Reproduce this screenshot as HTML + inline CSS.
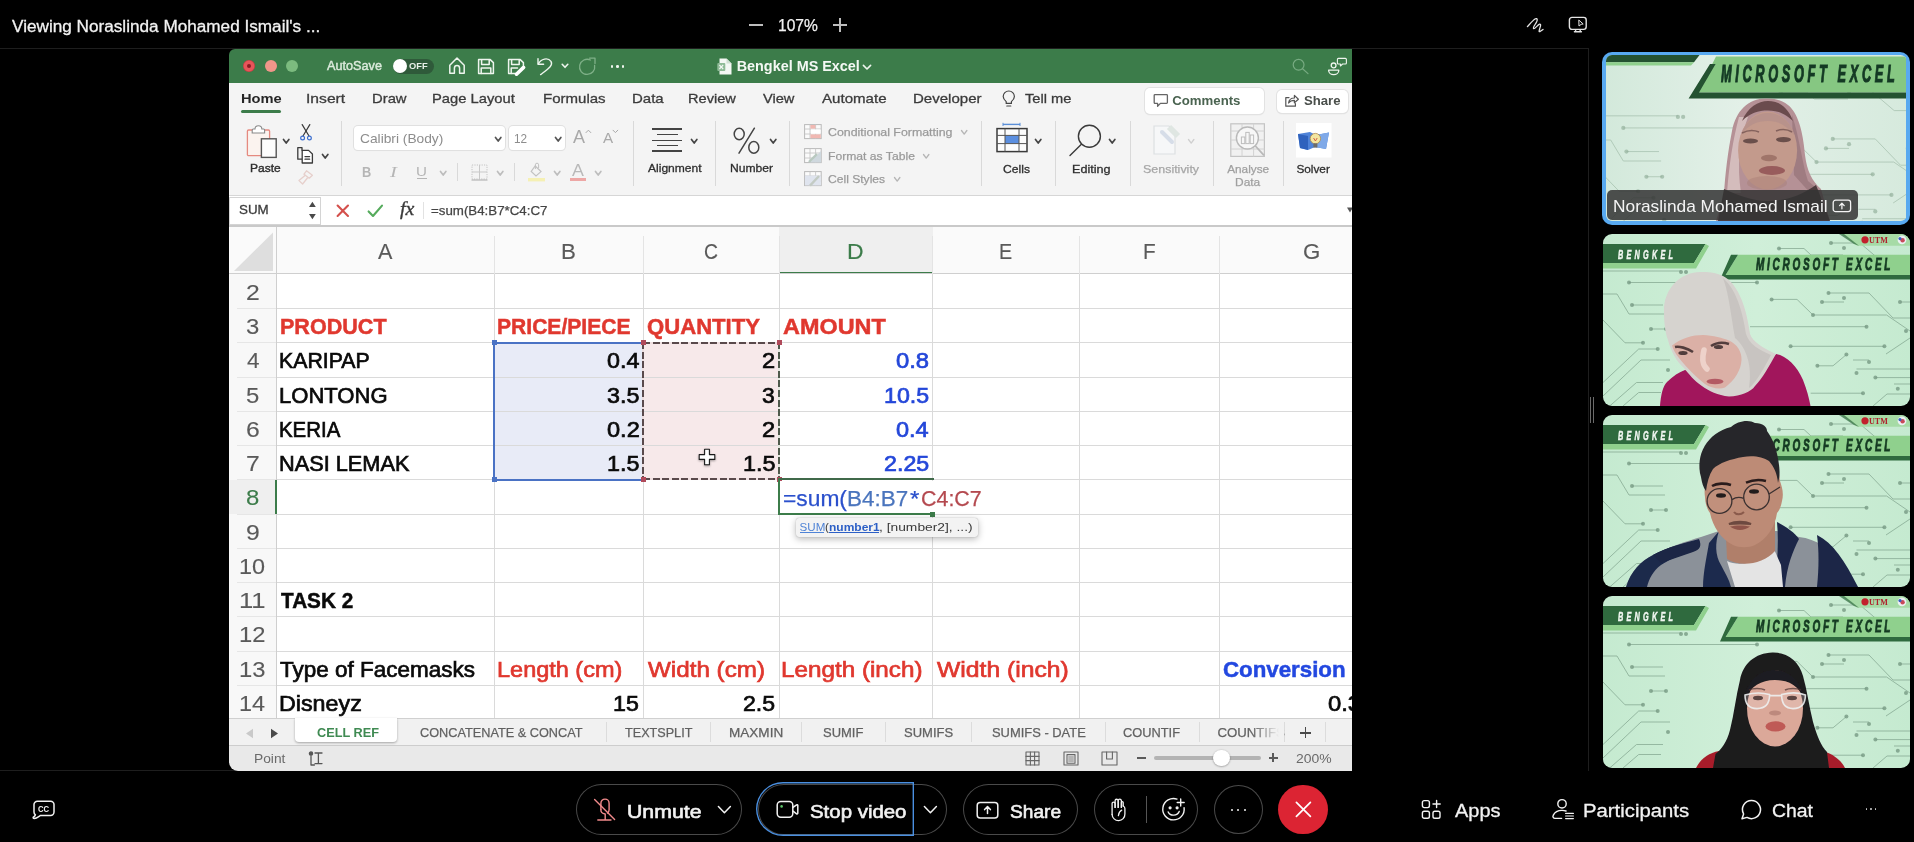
<!DOCTYPE html>
<html><head><meta charset="utf-8"><title>Meeting</title>
<style>
html,body{margin:0;padding:0;background:#000;}
body{width:1914px;height:842px;position:relative;overflow:hidden;font-family:'Liberation Sans', sans-serif;opacity:.999;}
body>div,body>svg,body>span{position:absolute;}
.t{white-space:pre;line-height:1;transform-origin:0 50%;display:block;}
svg{overflow:visible}
</style></head>
<body>
<div style="left:0px;top:48px;width:1588px;height:1px;background:#1e1e1e;"></div>
<div style="left:1588px;top:48px;width:1px;height:723px;background:#1e1e1e;"></div>
<div style="left:0px;top:770px;width:1588px;height:1px;background:#1e1e1e;"></div>
<div style="left:1590px;top:397px;width:1px;height:26px;background:#6a6a6a;"></div>
<div style="left:1593px;top:397px;width:1px;height:26px;background:#6a6a6a;"></div>
<div style="left:749px;top:24px;width:14px;height:2px;background:#bdbdbd;"></div>
<div style="left:833px;top:24px;width:14px;height:2px;background:#bdbdbd;"></div>
<div style="left:839px;top:18px;width:2px;height:14px;background:#bdbdbd;"></div>
<div style="left:229px;top:49px;width:1123px;height:40px;background:#3c7c4a;border-radius:6px 0 0 0;"></div>
<div style="left:229px;top:83px;width:1123px;height:113px;background:#f4f4f4;"></div>
<div style="left:229px;top:195px;width:1123px;height:1px;background:#d6d6d6;"></div>
<div style="left:229px;top:196px;width:1123px;height:29px;background:#ffffff;"></div>
<div style="left:229px;top:225px;width:1123px;height:2px;background:#c9c9c9;"></div>
<div style="left:229px;top:227px;width:1123px;height:491px;background:#ffffff;"></div>
<div style="left:229px;top:227px;width:1123px;height:47px;background:#fafafa;"></div>
<div style="left:229px;top:274px;width:47px;height:443.5px;background:#f8f8f8;"></div>
<div style="left:779px;top:227px;width:153.7px;height:45px;background:#efefef;"></div>
<div style="left:779px;top:272px;width:154px;height:2.2px;background:#3c7c4a;"></div>
<div style="left:229px;top:480px;width:47px;height:34px;background:#efefef;"></div>
<svg style="left:232px;top:231px;" width="42" height="41" viewBox="0 0 42 41"><polygon points="41,1.4 41,40 2,40" fill="#dedede"/></svg>
<div style="left:494.3px;top:342.5px;width:148.7px;height:137px;background:#e8ebf7;"></div>
<div style="left:643px;top:342.5px;width:136px;height:137px;background:#f7e9ea;"></div>
<div style="left:229px;top:273px;width:1123px;height:1.3px;background:#cfcfcf;"></div>
<div style="left:276px;top:307.5px;width:1076px;height:1px;background:#dadada;"></div>
<div style="left:237px;top:307.5px;width:39px;height:1px;background:#e6e6e6;"></div>
<div style="left:276px;top:342.0px;width:1076px;height:1px;background:#dadada;"></div>
<div style="left:237px;top:342.0px;width:39px;height:1px;background:#e6e6e6;"></div>
<div style="left:276px;top:376.5px;width:1076px;height:1px;background:#dadada;"></div>
<div style="left:237px;top:376.5px;width:39px;height:1px;background:#e6e6e6;"></div>
<div style="left:276px;top:410.5px;width:1076px;height:1px;background:#dadada;"></div>
<div style="left:237px;top:410.5px;width:39px;height:1px;background:#e6e6e6;"></div>
<div style="left:276px;top:444.5px;width:1076px;height:1px;background:#dadada;"></div>
<div style="left:237px;top:444.5px;width:39px;height:1px;background:#e6e6e6;"></div>
<div style="left:276px;top:479.0px;width:1076px;height:1px;background:#dadada;"></div>
<div style="left:237px;top:479.0px;width:39px;height:1px;background:#e6e6e6;"></div>
<div style="left:276px;top:513.5px;width:1076px;height:1px;background:#dadada;"></div>
<div style="left:237px;top:513.5px;width:39px;height:1px;background:#e6e6e6;"></div>
<div style="left:276px;top:547.5px;width:1076px;height:1px;background:#dadada;"></div>
<div style="left:237px;top:547.5px;width:39px;height:1px;background:#e6e6e6;"></div>
<div style="left:276px;top:581.5px;width:1076px;height:1px;background:#dadada;"></div>
<div style="left:237px;top:581.5px;width:39px;height:1px;background:#e6e6e6;"></div>
<div style="left:276px;top:616.0px;width:1076px;height:1px;background:#dadada;"></div>
<div style="left:237px;top:616.0px;width:39px;height:1px;background:#e6e6e6;"></div>
<div style="left:276px;top:650.5px;width:1076px;height:1px;background:#dadada;"></div>
<div style="left:237px;top:650.5px;width:39px;height:1px;background:#e6e6e6;"></div>
<div style="left:276px;top:684.5px;width:1076px;height:1px;background:#dadada;"></div>
<div style="left:237px;top:684.5px;width:39px;height:1px;background:#e6e6e6;"></div>
<div style="left:275.5px;top:227px;width:1.2px;height:490.5px;background:#cfcfcf;"></div>
<div style="left:493.8px;top:236px;width:1px;height:38px;background:#e4e4e4;"></div>
<div style="left:493.8px;top:274px;width:1px;height:443.5px;background:#dadada;"></div>
<div style="left:642.5px;top:236px;width:1px;height:38px;background:#e4e4e4;"></div>
<div style="left:642.5px;top:274px;width:1px;height:443.5px;background:#dadada;"></div>
<div style="left:778.5px;top:236px;width:1px;height:38px;background:#e4e4e4;"></div>
<div style="left:778.5px;top:274px;width:1px;height:443.5px;background:#dadada;"></div>
<div style="left:932.2px;top:236px;width:1px;height:38px;background:#e4e4e4;"></div>
<div style="left:932.2px;top:274px;width:1px;height:443.5px;background:#dadada;"></div>
<div style="left:1079.0px;top:236px;width:1px;height:38px;background:#e4e4e4;"></div>
<div style="left:1079.0px;top:274px;width:1px;height:443.5px;background:#dadada;"></div>
<div style="left:1219.0px;top:236px;width:1px;height:38px;background:#e4e4e4;"></div>
<div style="left:1219.0px;top:274px;width:1px;height:443.5px;background:#dadada;"></div>
<div style="left:274.6px;top:479.5px;width:2.4px;height:34.5px;background:#3c7c4a;"></div>
<div style="left:493.3px;top:341.7px;width:150px;height:2px;background:#4a72c4;"></div>
<div style="left:493.3px;top:478.5px;width:150px;height:2px;background:#4a72c4;"></div>
<div style="left:493.3px;top:341.7px;width:2px;height:139px;background:#4a72c4;"></div>
<div style="left:491.8px;top:340.3px;width:5px;height:5px;background:#4a72c4;"></div>
<div style="left:491.8px;top:477.2px;width:5px;height:5px;background:#4a72c4;"></div>
<div style="left:643px;top:341.7px;width:137px;height:2.2px;background:repeating-linear-gradient(90deg,#5a4a4c 0 7px,#eedfe0 7px 9.6px);"></div>
<div style="left:643px;top:478.3px;width:137px;height:2.2px;background:repeating-linear-gradient(90deg,#5a4a4c 0 7px,#eedfe0 7px 9.6px);"></div>
<div style="left:642px;top:342px;width:2.2px;height:138px;background:repeating-linear-gradient(180deg,#5a4a4c 0 7px,#eedfe0 7px 9.6px);"></div>
<div style="left:778px;top:342px;width:2.2px;height:138px;background:repeating-linear-gradient(180deg,#4f5a4c 0 7px,#e4e8e0 7px 9.6px);"></div>
<div style="left:640.8px;top:340.3px;width:5px;height:5px;background:#b04a5a;"></div>
<div style="left:777.3px;top:340.3px;width:5px;height:5px;background:#b04a5a;"></div>
<div style="left:640.8px;top:477.2px;width:5px;height:5px;background:#b04a5a;"></div>
<div style="left:777.3px;top:477.2px;width:5px;height:5px;background:#b04a5a;"></div>
<div style="left:780px;top:480.5px;width:204px;height:32.5px;background:#ffffff;"></div>
<div style="left:778px;top:478.3px;width:156px;height:2px;background:#40694a;"></div>
<div style="left:778px;top:478.3px;width:2px;height:36.5px;background:#3c7c4a;"></div>
<div style="left:778px;top:513px;width:152px;height:2px;background:#3c7c4a;"></div>
<div style="left:930px;top:512px;width:5px;height:5px;background:#3c7c4a;"></div>
<div style="left:795.5px;top:517.5px;width:182.5px;height:19px;background:#f3f3f3;border-radius:3px;box-shadow:0 2px 7px rgba(0,0,0,.28),0 0 1px rgba(0,0,0,.35);"></div>
<div style="left:799.9px;top:532px;width:24.6px;height:1px;background:#4f83d6;"></div>
<div style="left:829.3px;top:532px;width:49.7px;height:1.3px;background:#2c5fc6;"></div>
<div style="left:243.0px;top:59.8px;width:12.4px;height:12.4px;border-radius:50%;background:#e8555a;box-shadow:inset 0 0 0 .6px rgba(120,20,20,.35);"></div>
<div style="left:247.2px;top:64px;width:4px;height:4px;border-radius:50%;background:#8a1a22;"></div>
<div style="left:264.6px;top:59.8px;width:12.4px;height:12.4px;border-radius:50%;background:#f0968a;"></div>
<div style="left:286.1px;top:59.8px;width:12.4px;height:12.4px;border-radius:50%;background:#7cbb7f;"></div>
<div style="left:392.5px;top:58.5px;width:41px;height:15px;background:#2f5a3a;border-radius:8px;"></div>
<div style="left:393.2px;top:59px;width:14px;height:14px;border-radius:50%;background:#ffffff;"></div>
<svg style="left:448px;top:56px;" width="18" height="19" viewBox="0 0 18 19" fill="none" stroke="#eef5ee" stroke-width="1.5" stroke-linecap="round" stroke-linejoin="round"><path d="M1.8 9.2 L9 2 L16.2 9.2 V17.2 H11.6 V12.2 a2.6 2.6 0 0 0 -5.2 0 V17.2 H1.8 Z"/></svg>
<svg style="left:477px;top:58px;" width="18" height="17" viewBox="0 0 18 17" fill="none" stroke="#eef5ee" stroke-width="1.5" stroke-linecap="round" stroke-linejoin="round"><path d="M1.6 1.6 H13.2 L16.4 4.6 V15.6 H1.6 Z"/><path d="M4.6 1.8 V6.4 H12.2 V1.8"/><path d="M4.2 15.4 V10 H13.8 V15.4"/></svg>
<svg style="left:506.5px;top:58px;" width="19" height="18" viewBox="0 0 19 18" fill="none" stroke="#eef5ee" stroke-width="1.5" stroke-linecap="round" stroke-linejoin="round"><path d="M9 15.6 H1.6 V1.6 H13.2 L16.4 4.6 V7.5"/><path d="M4.6 1.8 V6.4 H12.2 V1.8"/><path d="M4.2 15.4 V10 H10.5"/><path d="M9.5 16.2 L16.6 9.4" stroke-width="3.6" stroke="#ffffff"/></svg>
<svg style="left:536px;top:56px;" width="18" height="20" viewBox="0 0 18 20" fill="none" stroke="#eef5ee" stroke-width="1.4" stroke-linecap="round" stroke-linejoin="round"><path d="M2 2.6 V8.2 H7.6"/><path d="M2.4 7.8 C5 2.6 12 1.2 15 5.4 C17.4 9.4 12.4 12.6 4.6 18.6"/></svg>
<svg style="left:561px;top:63.4px;" width="8" height="6" viewBox="0 0 8 6" fill="none" stroke="#eef5ee" stroke-width="1.6" stroke-linecap="round" stroke-linejoin="round"><path d="M1.2 1.3 L4 4.3 L6.8 1.3"/></svg>
<svg style="left:578px;top:57px;" width="20" height="19" viewBox="0 0 20 19" fill="none" stroke="#7fb088" stroke-width="1.3" stroke-linecap="round" stroke-linejoin="round"><path d="M16.6 8.4 A7.6 7.6 0 1 1 12.4 3"/><path d="M11.6 1.2 H17 V6.6"/></svg>
<div style="left:610.7px;top:65.10000000000001px;width:2.6px;height:2.6px;border-radius:50%;background:#eef5ee;"></div>
<div style="left:616.1px;top:65.10000000000001px;width:2.6px;height:2.6px;border-radius:50%;background:#eef5ee;"></div>
<div style="left:621.5px;top:65.10000000000001px;width:2.6px;height:2.6px;border-radius:50%;background:#eef5ee;"></div>
<svg style="left:716.5px;top:57.5px;" width="15" height="17" viewBox="0 0 15 17"><path d="M2.5 0.5 H9.5 L14.5 5.5 V16.5 H2.5 Z" fill="#f4f8f4"/><path d="M9.5 0.5 V5.5 H14.5" fill="#cfe0d2"/><rect x="0.3" y="5" width="8" height="8" rx="1" fill="#8fbb97"/><path d="M2.4 7 L6.2 11 M6.2 7 L2.4 11" stroke="#f4f8f4" stroke-width="1.1"/></svg>
<svg style="left:861.5px;top:63.5px;" width="10" height="7" viewBox="0 0 10 7" fill="none" stroke="#eef5ee" stroke-width="1.6" stroke-linecap="round" stroke-linejoin="round"><path d="M1.4 1.4 L5 5 L8.6 1.4"/></svg>
<svg style="left:1292px;top:58px;" width="18" height="17" viewBox="0 0 18 17" fill="none" stroke="#78ab82" stroke-width="1.2" stroke-linecap="round" stroke-linejoin="round"><circle cx="6.6" cy="6.8" r="5.4"/><path d="M10.6 10.8 L16 15.6"/></svg>
<svg style="left:1326.5px;top:56.5px;" width="21" height="20" viewBox="0 0 21 20" fill="none" stroke="#eef5ee" stroke-width="1.3" stroke-linecap="round" stroke-linejoin="round"><circle cx="6.6" cy="8.4" r="2.4"/><path d="M1.6 13.2 H11.8 C11.8 19.2 1.6 19.2 1.6 13.2 Z"/><path d="M11.4 1.4 H18.4 a1 1 0 0 1 1 1 V6 a1 1 0 0 1 -1 1 H15.6 L13.4 9 V7 H11.4 a1 1 0 0 1 -1 -1 V2.4 a1 1 0 0 1 1 -1 Z" stroke-width="1.1"/></svg>
<div style="left:241px;top:110px;width:40px;height:3px;background:#3c7c4a;border-radius:1.5px;"></div>
<svg style="left:1000.5px;top:90px;" width="16" height="19" viewBox="0 0 16 19" fill="none" stroke="#444" stroke-width="1.2" stroke-linecap="round" stroke-linejoin="round"><path d="M5.2 11.6 C3 9.8 2.2 8.2 2.2 6.6 a5.6 5.6 0 0 1 11.2 0 C13.4 8.2 12.6 9.8 10.4 11.6 V13.4 H5.2 Z"/><path d="M5.8 16 H9.8"/></svg>
<div style="left:1145px;top:87.5px;width:119px;height:26px;background:#ffffff;border-radius:5px;box-shadow:0 0 0 1px #e2e2e2,0 1px 1.5px rgba(0,0,0,.10);"></div>
<div style="left:1277px;top:89.5px;width:70.5px;height:23px;background:#ffffff;border-radius:5px;box-shadow:0 0 0 1px #e2e2e2,0 1px 1.5px rgba(0,0,0,.10);"></div>
<svg style="left:1152.5px;top:93px;" width="16" height="15" viewBox="0 0 16 15" fill="none" stroke="#666" stroke-width="1.3" stroke-linecap="round" stroke-linejoin="round"><path d="M2 1.6 H13.6 a0.8 0.8 0 0 1 .8 .8 V9.6 a0.8 .8 0 0 1 -.8 .8 H7.4 L4.6 13.2 V10.4 H2 a.8 .8 0 0 1 -.8 -.8 V2.4 a.8 .8 0 0 1 .8 -.8 Z"/></svg>
<svg style="left:1284px;top:93px;" width="16" height="15" viewBox="0 0 16 15" fill="none" stroke="#555" stroke-width="1.2" stroke-linecap="round" stroke-linejoin="round"><path d="M5 4.6 H1.8 V13.2 H11.4 V10.6"/><path d="M4.6 10 C5 6.6 7.4 5 10.4 5 V2.4 L14.4 6.2 L10.4 9.8 V7.4 C8 7.4 6 8 4.6 10 Z"/></svg>
<div style="left:341.4px;top:120.5px;width:1px;height:65.5px;background:#d9d9d9;"></div>
<div style="left:633.0px;top:120.5px;width:1px;height:65.5px;background:#d9d9d9;"></div>
<div style="left:714.8px;top:120.5px;width:1px;height:65.5px;background:#d9d9d9;"></div>
<div style="left:789.2px;top:120.5px;width:1px;height:65.5px;background:#d9d9d9;"></div>
<div style="left:980.5px;top:120.5px;width:1px;height:65.5px;background:#d9d9d9;"></div>
<div style="left:1054.9px;top:120.5px;width:1px;height:65.5px;background:#d9d9d9;"></div>
<div style="left:1129.5px;top:120.5px;width:1px;height:65.5px;background:#d9d9d9;"></div>
<div style="left:1212.7px;top:120.5px;width:1px;height:65.5px;background:#d9d9d9;"></div>
<div style="left:1282.7px;top:120.5px;width:1px;height:65.5px;background:#d9d9d9;"></div>
<div style="left:456.7px;top:163px;width:1px;height:18px;background:#d9d9d9;"></div>
<div style="left:513.8px;top:163px;width:1px;height:18px;background:#d9d9d9;"></div>
<svg style="left:246px;top:124.5px;" width="32" height="34" viewBox="0 0 32 34"><rect x="1.4" y="5" width="22.2" height="25.6" rx="1.2" fill="#fbf3ef" stroke="#e58a80" stroke-width="1.3"/><path d="M6.2 8 V5 a1 1 0 0 1 1 -1 H9 a3.4 3.2 0 0 1 6.8 0 H17.6 a1 1 0 0 1 1 1 V8 Z" fill="#fff" stroke="#8a8a8a" stroke-width="1.1"/><rect x="15.4" y="13.8" width="14.8" height="18.6" fill="#fdfdfd" stroke="#555" stroke-width="1.4"/></svg>
<svg style="left:282.1px;top:137.9px;" width="8.4" height="6.6" viewBox="0 0 8.4 6.6" fill="none" stroke="#444" stroke-width="1.7" stroke-linecap="round" stroke-linejoin="round"><path d="M1.5 1.5 L4.2 5.1 L6.9 1.5"/></svg>
<svg style="left:298.5px;top:122.5px;" width="14" height="19" viewBox="0 0 14 19" fill="none" stroke="#3a3a3a" stroke-width="1.2" stroke-linecap="round" stroke-linejoin="round"><path d="M3.2 1.6 L10 13"/><path d="M10.8 1.6 L4 13"/><circle cx="3.6" cy="15" r="1.9" stroke="#3d6fd0"/><circle cx="10.4" cy="15" r="1.9" stroke="#3d6fd0"/></svg>
<svg style="left:296px;top:146.2px;" width="20" height="19" viewBox="0 0 20 19" fill="none" stroke="#3a3a3a" stroke-width="1.3" stroke-linecap="round" stroke-linejoin="round"><path d="M6 4.2 V1.6 H1.8 V13.2 H6" /><path d="M6.2 4.4 H12.6 L16.4 8 V17 H6.2 Z" fill="#fff"/><path d="M9 10.6 H13.6 M9 13.2 H13.6"/></svg>
<svg style="left:320.7px;top:152.70000000000002px;" width="8.4" height="6.6" viewBox="0 0 8.4 6.6" fill="none" stroke="#444" stroke-width="1.7" stroke-linecap="round" stroke-linejoin="round"><path d="M1.5 1.5 L4.2 5.1 L6.9 1.5"/></svg>
<svg style="left:297px;top:169px;" width="18" height="17" viewBox="0 0 18 17" fill="none" stroke="#e6cfcb" stroke-width="1.3" stroke-linecap="round" stroke-linejoin="round"><path d="M9.5 1.8 L15.4 6.2 L12.2 9.2 L7 5.2 Z"/><path d="M8 6.4 L2 11.6 L5.6 15 L10.4 9"/></svg>
<div style="left:354px;top:126px;width:151px;height:24px;background:#ffffff;border-radius:4px;box-shadow:0 0 0 1px #e0e0e0, 0 1px 1px rgba(0,0,0,.07);"></div>
<div style="left:508.8px;top:126px;width:56.7px;height:24px;background:#ffffff;border-radius:4px;box-shadow:0 0 0 1px #e0e0e0, 0 1px 1px rgba(0,0,0,.07);"></div>
<svg style="left:493.7px;top:135.9px;" width="8.4" height="6.6" viewBox="0 0 8.4 6.6" fill="none" stroke="#555" stroke-width="1.7" stroke-linecap="round" stroke-linejoin="round"><path d="M1.5 1.5 L4.2 5.1 L6.9 1.5"/></svg>
<svg style="left:553.9px;top:135.9px;" width="8.4" height="6.6" viewBox="0 0 8.4 6.6" fill="none" stroke="#555" stroke-width="1.7" stroke-linecap="round" stroke-linejoin="round"><path d="M1.5 1.5 L4.2 5.1 L6.9 1.5"/></svg>
<svg style="left:584.5px;top:128.5px;" width="7" height="5" viewBox="0 0 7 5" fill="none" stroke="#a9a9a9" stroke-width="1" stroke-linecap="round" stroke-linejoin="round"><path d="M1 3.6 L3.4 1.2 L5.8 3.6"/></svg>
<svg style="left:612px;top:128.5px;" width="7" height="5" viewBox="0 0 7 5" fill="none" stroke="#a9a9a9" stroke-width="1" stroke-linecap="round" stroke-linejoin="round"><path d="M1 1.2 L3.4 3.6 L5.8 1.2"/></svg>
<div style="left:417px;top:178px;width:9.6px;height:1px;background:#b5b5b5;"></div>
<svg style="left:438.9px;top:169.70000000000002px;" width="8.4" height="6.6" viewBox="0 0 8.4 6.6" fill="none" stroke="#bdbdbd" stroke-width="1.7" stroke-linecap="round" stroke-linejoin="round"><path d="M1.5 1.5 L4.2 5.1 L6.9 1.5"/></svg>
<svg style="left:470.5px;top:163.5px;" width="17" height="17" viewBox="0 0 17 17"><rect x="1" y="1" width="15" height="14" fill="none" stroke="#c4c4c4" stroke-width="1" stroke-dasharray="1.2 1.2"/><path d="M8.5 1 V15 M1 8 H16" stroke="#c9c9c9" stroke-width="1"/><path d="M0.5 16 H16.5" stroke="#b5b5b5" stroke-width="1.2"/></svg>
<svg style="left:496.3px;top:169.70000000000002px;" width="8.4" height="6.6" viewBox="0 0 8.4 6.6" fill="none" stroke="#bdbdbd" stroke-width="1.7" stroke-linecap="round" stroke-linejoin="round"><path d="M1.5 1.5 L4.2 5.1 L6.9 1.5"/></svg>
<svg style="left:527px;top:163px;" width="19" height="19" viewBox="0 0 19 19"><path d="M8.2 3 L14 8.6 L9 13 L4.2 8.4 Z" fill="none" stroke="#c2c2c2" stroke-width="1.2"/><path d="M8.4 6 V1.8 a1.6 1.6 0 0 1 3.2 0 V5" fill="none" stroke="#c2c2c2" stroke-width="1"/><rect x="1" y="15" width="17" height="3.4" fill="#f5f0b4"/></svg>
<svg style="left:552.9px;top:169.70000000000002px;" width="8.4" height="6.6" viewBox="0 0 8.4 6.6" fill="none" stroke="#bdbdbd" stroke-width="1.7" stroke-linecap="round" stroke-linejoin="round"><path d="M1.5 1.5 L4.2 5.1 L6.9 1.5"/></svg>
<div style="left:569.6px;top:177.6px;width:16.8px;height:3.4px;background:#eda7a5;"></div>
<svg style="left:593.5px;top:169.70000000000002px;" width="8.4" height="6.6" viewBox="0 0 8.4 6.6" fill="none" stroke="#bdbdbd" stroke-width="1.7" stroke-linecap="round" stroke-linejoin="round"><path d="M1.5 1.5 L4.2 5.1 L6.9 1.5"/></svg>
<div style="left:652.3px;top:128.4px;width:30px;height:1.3px;background:#444;"></div>
<div style="left:656.7px;top:134px;width:21.3px;height:1.3px;background:#444;"></div>
<div style="left:652.3px;top:139.6px;width:30px;height:1.3px;background:#444;"></div>
<div style="left:656.7px;top:145px;width:21.3px;height:1.3px;background:#444;"></div>
<div style="left:652.3px;top:150.4px;width:30px;height:1.3px;background:#444;"></div>
<svg style="left:689.9px;top:138.10000000000002px;" width="8.4" height="6.6" viewBox="0 0 8.4 6.6" fill="none" stroke="#444" stroke-width="1.7" stroke-linecap="round" stroke-linejoin="round"><path d="M1.5 1.5 L4.2 5.1 L6.9 1.5"/></svg>
<svg style="left:731.5px;top:126px;" width="30" height="30" viewBox="0 0 30 30" fill="none" stroke="#444" stroke-width="1.5" stroke-linecap="round" stroke-linejoin="round"><ellipse cx="7.2" cy="8" rx="5" ry="5.8"/><ellipse cx="21.8" cy="21.4" rx="5" ry="5.8"/><path d="M22.4 2.2 L7 27.2"/></svg>
<svg style="left:769.3px;top:138.10000000000002px;" width="8.4" height="6.6" viewBox="0 0 8.4 6.6" fill="none" stroke="#444" stroke-width="1.7" stroke-linecap="round" stroke-linejoin="round"><path d="M1.5 1.5 L4.2 5.1 L6.9 1.5"/></svg>
<svg style="left:804.3px;top:124px;" width="18" height="15.5" viewBox="0 0 18 15.5"><rect x="0.6" y="0.6" width="16.6" height="14" fill="#fbfbfb" stroke="#b9b9b9" stroke-width="1"/><path d="M0.6 5 H17.2 M0.6 10 H17.2 M6 0.6 V14.6 M11.6 0.6 V14.6" stroke="#c6c6c6" stroke-width="0.9"/><rect x="6.4" y="1" width="5" height="3.6" fill="#f1b8b2"/><rect x="6.4" y="10.4" width="10.4" height="3.8" fill="#f1b8b2"/><rect x="7" y="5.4" width="9.6" height="4.4" fill="#fff"/></svg>
<svg style="left:804.3px;top:147.8px;" width="18" height="15.5" viewBox="0 0 18 15.5"><rect x="0.6" y="0.6" width="16.6" height="14" fill="#fbfbfb" stroke="#b9b9b9" stroke-width="1"/><path d="M0.6 5 H17.2 M0.6 10 H17.2 M6 0.6 V14.6 M11.6 0.6 V14.6" stroke="#c6c6c6" stroke-width="0.9"/><path d="M6 14.6 L17 3 V14.6 Z" fill="#cfd8de"/><path d="M5 14 L13 6" stroke="#b9c9c0" stroke-width="2.4"/></svg>
<svg style="left:804.3px;top:171.2px;" width="18" height="15.5" viewBox="0 0 18 15.5"><rect x="0.6" y="0.6" width="16.6" height="14" fill="#fbfbfb" stroke="#b9b9b9" stroke-width="1"/><path d="M0.6 5 H17.2 M0.6 10 H17.2 M6 0.6 V14.6 M11.6 0.6 V14.6" stroke="#c6c6c6" stroke-width="0.9"/><rect x="1" y="4.6" width="15.8" height="9.8" fill="#dfe4ee"/><path d="M6 14.6 L15 5" stroke="#c3cbc4" stroke-width="2.4"/></svg>
<svg style="left:959.9px;top:128.9px;" width="8.4" height="6.6" viewBox="0 0 8.4 6.6" fill="none" stroke="#b5b5b5" stroke-width="1.3" stroke-linecap="round" stroke-linejoin="round"><path d="M1.5 1.5 L4.2 5.1 L6.9 1.5"/></svg>
<svg style="left:921.9px;top:152.5px;" width="8.4" height="6.6" viewBox="0 0 8.4 6.6" fill="none" stroke="#b5b5b5" stroke-width="1.3" stroke-linecap="round" stroke-linejoin="round"><path d="M1.5 1.5 L4.2 5.1 L6.9 1.5"/></svg>
<svg style="left:892.7px;top:175.9px;" width="8.4" height="6.6" viewBox="0 0 8.4 6.6" fill="none" stroke="#b5b5b5" stroke-width="1.3" stroke-linecap="round" stroke-linejoin="round"><path d="M1.5 1.5 L4.2 5.1 L6.9 1.5"/></svg>
<svg style="left:995.5px;top:122px;" width="33" height="31" viewBox="0 0 33 31"><path d="M7 2.4 H24" stroke="#5b8fd8" stroke-width="1.4"/><path d="M7 0.8 V4 M24 .8 V4" stroke="#5b8fd8" stroke-width="1"/><rect x="1" y="6.6" width="30" height="23" fill="#fdfdfd" stroke="#3a3a3a" stroke-width="1.5"/><rect x="9" y="13.4" width="14" height="8.2" fill="#5b8fe0"/><path d="M1 13.4 H31 M1 21.6 H31 M9 6.6 V29.6 M23 6.6 V29.6" stroke="#555" stroke-width="1"/></svg>
<svg style="left:1033.5px;top:138.10000000000002px;" width="8.4" height="6.6" viewBox="0 0 8.4 6.6" fill="none" stroke="#444" stroke-width="1.7" stroke-linecap="round" stroke-linejoin="round"><path d="M1.5 1.5 L4.2 5.1 L6.9 1.5"/></svg>
<svg style="left:1067px;top:122px;" width="36" height="36" viewBox="0 0 36 36" fill="none" stroke="#3a3a3a" stroke-width="1.4" stroke-linecap="round" stroke-linejoin="round"><circle cx="22.4" cy="14.3" r="11"/><path d="M14.4 22.2 L3 33.4"/></svg>
<svg style="left:1107.9px;top:138.10000000000002px;" width="8.4" height="6.6" viewBox="0 0 8.4 6.6" fill="none" stroke="#444" stroke-width="1.7" stroke-linecap="round" stroke-linejoin="round"><path d="M1.5 1.5 L4.2 5.1 L6.9 1.5"/></svg>
<svg style="left:1152px;top:123px;" width="32" height="34" viewBox="0 0 32 34"><path d="M2 3 H17 L23 9 V31 H2 Z" fill="#f6f7f8" stroke="#dcdfe2" stroke-width="1.2"/><path d="M10 9 L20 19" stroke="#d6dde8" stroke-width="4" stroke-linecap="round"/><path d="M17 4 L26 13" stroke="#dfe6e2" stroke-width="6"/></svg>
<svg style="left:1186.5px;top:138.10000000000002px;" width="8.4" height="6.6" viewBox="0 0 8.4 6.6" fill="none" stroke="#cfcfcf" stroke-width="1.3" stroke-linecap="round" stroke-linejoin="round"><path d="M1.5 1.5 L4.2 5.1 L6.9 1.5"/></svg>
<svg style="left:1230px;top:123.4px;" width="35.5" height="34.5" viewBox="0 0 35.5 34.5"><rect x="0.8" y="0.8" width="33.6" height="32.6" fill="#f1f1f1" stroke="#c4c4c4" stroke-width="1.2"/><path d="M.8 8 H34.4 M.8 17 H34.4 M.8 26 H34.4 M12 .8 V33.4 M23.6 .8 V33.4" stroke="#d2d2d2" stroke-width="1"/><circle cx="17.4" cy="15" r="11" fill="#f7f7f7" stroke="#b9b9b9" stroke-width="1.4"/><path d="M25.4 23 L34 32.4" stroke="#b9b9b9" stroke-width="1.8"/><rect x="11.4" y="14" width="3.4" height="6.6" fill="none" stroke="#bdbdbd"/><rect x="15.8" y="9.4" width="3.4" height="11.2" fill="none" stroke="#bdbdbd"/><rect x="20.2" y="12" width="3.4" height="8.6" fill="none" stroke="#bdbdbd"/></svg>
<svg style="left:1296px;top:123.4px;" width="35.5" height="34.5" viewBox="0 0 35.5 34.5"><rect width="35.5" height="34.5" fill="#ffffff"/><path d="M2 11 L14 9 L20 12 L33 9.6 L30 26 L19 24 L12 27 L4 25 Z" fill="#4f83d8"/><path d="M2 11 L12 13 L12 27 L4 25 Z" fill="#2f62bd"/><path d="M20 12 L33 9.6 L30 26 L19 24 Z" fill="#7fa9e8"/><circle cx="19.4" cy="15.6" r="5.2" fill="#f3e6a0" stroke="#b08a4a" stroke-width="0.8"/><rect x="17.4" y="20.4" width="4" height="4.2" fill="#6c6c6c"/><path d="M17.6 15 L19.4 18 L21.2 15" stroke="#d0553c" stroke-width="0.9" fill="none"/></svg>
<div style="left:229px;top:196.5px;width:91.5px;height:28px;background:#ffffff;box-shadow:inset 0 0 0 1px #d4d4d4;"></div>
<svg style="left:307.5px;top:201px;" width="9" height="19" viewBox="0 0 9 19"><path d="M1 6 L4.4 .8 L7.8 6 Z M1 13 L4.4 18.2 L7.8 13 Z" fill="#4a4a4a"/></svg>
<svg style="left:335.5px;top:203.5px;" width="14" height="14" viewBox="0 0 14 14" fill="none" stroke="#d4504c" stroke-width="2.1" stroke-linecap="round" stroke-linejoin="round"><path d="M1.6 1.6 L12 12 M12 1.6 L1.6 12"/></svg>
<svg style="left:367px;top:203.5px;" width="17" height="14" viewBox="0 0 17 14" fill="none" stroke="#55ab5c" stroke-width="2.1" stroke-linecap="round" stroke-linejoin="round"><path d="M1.6 7.4 L6 12 L15 1.6"/></svg>
<div style="left:423px;top:202px;width:1px;height:17px;background:#e2e2e2;"></div>
<svg style="left:1344px;top:206px;" width="8" height="8" viewBox="0 0 8 8"><path d="M3 1.4 H9 L6 6.4 Z" fill="#555"/></svg>
<div style="left:229px;top:717.5px;width:1123px;height:28px;background:#f1f1f1;"></div>
<div style="left:229px;top:717.5px;width:1123px;height:1px;background:#d0d0d0;"></div>
<div style="left:229px;top:745px;width:1123px;height:25.5px;background:#e9e9e9;border-radius:0 0 0 9px;"></div>
<div style="left:229px;top:744.5px;width:1123px;height:1px;background:#cdcdcd;"></div>
<div style="left:295px;top:717.5px;width:102.3px;height:24px;background:#ffffff;border-radius:0 0 4px 4px;box-shadow:0 1px 2.5px rgba(0,0,0,.32);"></div>
<div style="left:606.1px;top:722px;width:1px;height:20px;background:#dcdcdc;"></div>
<div style="left:710.3px;top:722px;width:1px;height:20px;background:#dcdcdc;"></div>
<div style="left:800.8px;top:722px;width:1px;height:20px;background:#dcdcdc;"></div>
<div style="left:885.4px;top:722px;width:1px;height:20px;background:#dcdcdc;"></div>
<div style="left:970.5px;top:722px;width:1px;height:20px;background:#dcdcdc;"></div>
<div style="left:1104.5px;top:722px;width:1px;height:20px;background:#dcdcdc;"></div>
<div style="left:1199.0px;top:722px;width:1px;height:20px;background:#dcdcdc;"></div>
<div style="left:1283.8px;top:722px;width:1px;height:20px;background:#dcdcdc;"></div>
<div style="left:1324.9px;top:722px;width:1px;height:20px;background:#dcdcdc;"></div>
<svg style="left:245px;top:727.5px;" width="9" height="11" viewBox="0 0 9 11"><path d="M8 .8 V10.2 L1 5.5 Z" fill="#c9c9c9"/></svg>
<svg style="left:270px;top:727.5px;" width="9" height="11" viewBox="0 0 9 11"><path d="M1 .8 V10.2 L8 5.5 Z" fill="#4a4a4a"/></svg>
<div style="left:1299.8px;top:731.8px;width:11.4px;height:1.8px;background:#4a4a4a;"></div>
<div style="left:1304.6px;top:727px;width:1.8px;height:11.4px;background:#4a4a4a;"></div>
<svg style="left:307.5px;top:750.5px;" width="17" height="16" viewBox="0 0 17 16" fill="none" stroke="#555" stroke-width="1.3" stroke-linecap="round" stroke-linejoin="round"><circle cx="3" cy="2.6" r="1.6" fill="#555"/><path d="M7 2 H14 M10.4 2 V12.6 M7 12.6 H14 M3 5.4 V14 H6.4"/></svg>
<svg style="left:1024.5px;top:751.2px;" width="15" height="15" viewBox="0 0 15 15" fill="none" stroke="#666" stroke-width="1.1" stroke-linecap="round" stroke-linejoin="round"><rect x="1" y="1" width="13" height="13"/><path d="M1 5.4 H14 M1 9.6 H14 M5.4 1 V14 M9.6 1 V14"/></svg>
<svg style="left:1062.5px;top:751.2px;" width="16" height="15" viewBox="0 0 16 15" fill="none" stroke="#666" stroke-width="1.1" stroke-linecap="round" stroke-linejoin="round"><rect x="1" y="1" width="14" height="13"/><rect x="4" y="3.6" width="8" height="8.6" /><path d="M5.6 6 H10.4 M5.6 8 H10.4 M5.6 10 H10.4" stroke-width=".8"/></svg>
<svg style="left:1100.5px;top:751.2px;" width="17" height="15" viewBox="0 0 17 15" fill="none" stroke="#666" stroke-width="1.1" stroke-linecap="round" stroke-linejoin="round"><rect x="1" y="1" width="15" height="13"/><path d="M5.6 1 V8 H11.4 V1" /></svg>
<div style="left:1137px;top:757px;width:9px;height:1.8px;background:#5a5a5a;"></div>
<div style="left:1154px;top:756px;width:107px;height:4px;background:#b3b3b3;border-radius:2px;"></div>
<div style="left:1213.3999999999999px;top:749.6px;width:16.8px;height:16.8px;border-radius:50%;background:#ffffff;box-shadow:0 0.5px 2px rgba(0,0,0,.4);"></div>
<div style="left:1268.6px;top:757px;width:9px;height:1.8px;background:#5a5a5a;"></div>
<div style="left:1272.2px;top:753.4px;width:1.8px;height:9px;background:#5a5a5a;"></div>
<svg style="left:31px;top:799px;" width="26" height="22" viewBox="0 0 26 22" fill="none" stroke="#f2f2f2" stroke-width="1.5" stroke-linecap="round" stroke-linejoin="round"><path d="M6.4 2.2 H19.6 a3.4 3.4 0 0 1 3.4 3.4 V13 a3.4 3.4 0 0 1 -3.4 3.4 H9.6 C7.6 17.4 6 19.2 3.4 19.4 C2 19.4 1.8 18.4 2.6 18 C3.6 17.4 4.2 16.6 4.4 15.8 A3.4 3.4 0 0 1 3 13 V5.6 a3.4 3.4 0 0 1 3.4 -3.4 Z"/></svg>
<div style="left:575.7px;top:784.4px;width:166.0999999999999px;height:50.2px;background:transparent;border-radius:26px;box-shadow:inset 0 0 0 1px #4a4a4a;"></div>
<svg style="left:594px;top:798px;" width="22" height="24" viewBox="0 0 22 24" fill="none" stroke="#f28b8c" stroke-width="1.4" stroke-linecap="round" stroke-linejoin="round"><path d="M6.9 11.6 V5.2 a4.1 4.1 0 0 1 8.2 0 V11.8 a4.1 4.1 0 0 1 -1.6 3.2"/><path d="M6.9 11.6 a4.1 4.1 0 0 0 3.4 4.2"/><path d="M11.2 16 V21.8 M3.8 22 H17"/><path d="M0.6 1.4 L20.6 21.6"/></svg>
<svg style="left:717.4px;top:805px;" width="15" height="10" viewBox="0 0 15 10" fill="none" stroke="#f2f2f2" stroke-width="1.5" stroke-linecap="round" stroke-linejoin="round"><path d="M1.4 1.6 L7.4 7.8 L13.4 1.6"/></svg>
<div style="left:757.5px;top:784.4px;width:189.10000000000002px;height:50.2px;background:transparent;border-radius:26px;box-shadow:inset 0 0 0 1px #4a4a4a;"></div>
<div style="left:755.8px;top:782.3px;width:158.6px;height:54px;background:transparent;border-radius:27px 0 0 27px;box-shadow:inset 0 0 0 1.4px #4a8fe0;"></div>
<svg style="left:776.4px;top:799.8px;" width="24" height="19" viewBox="0 0 24 19" fill="none" stroke="#f2f2f2" stroke-width="1.5" stroke-linecap="round" stroke-linejoin="round"><rect x="1.2" y="1.4" width="15.6" height="15.8" rx="3.6"/><path d="M17 7.4 L20.6 4.8 a.8 .8 0 0 1 1.2 .6 V13.2 a.8 .8 0 0 1 -1.2 .6 L17 11.2"/><circle cx="5.6" cy="6.4" r="1.3" fill="#5ec46a" stroke="none"/></svg>
<svg style="left:922.6px;top:805px;" width="15" height="10" viewBox="0 0 15 10" fill="none" stroke="#f2f2f2" stroke-width="1.5" stroke-linecap="round" stroke-linejoin="round"><path d="M1.4 1.6 L7.4 7.8 L13.4 1.6"/></svg>
<div style="left:963px;top:784.4px;width:114.90000000000009px;height:50.2px;background:transparent;border-radius:26px;box-shadow:inset 0 0 0 1px #4a4a4a;"></div>
<svg style="left:975.8px;top:800.6px;" width="24" height="19" viewBox="0 0 24 19" fill="none" stroke="#f2f2f2" stroke-width="1.5" stroke-linecap="round" stroke-linejoin="round"><rect x="1.2" y="1.4" width="20.6" height="15.6" rx="3"/><path d="M11.5 12.6 V6 M8.6 8.6 L11.5 5.6 L14.4 8.6"/></svg>
<div style="left:1093.8px;top:784.4px;width:104.5px;height:50.2px;background:transparent;border-radius:26px;box-shadow:inset 0 0 0 1px #4a4a4a;"></div>
<svg style="left:1111px;top:798px;" width="16" height="24" viewBox="0 0 16 24" fill="none" stroke="#f2f2f2" stroke-width="1.3" stroke-linecap="round" stroke-linejoin="round"><path d="M1.1 16.4 V5.6 a1.5 1.5 0 0 1 3 0 V9.4"/><path d="M4.1 9.4 V2.8 a1.55 1.55 0 0 1 3.1 0 V9.4"/><path d="M7.2 9.4 V2.8 a1.6 1.6 0 0 1 3.2 0 V9.4"/><path d="M10.4 9.4 V4.6 a0.9 0.9 0 0 1 1.8 0 V8"/><path d="M12.2 8 C13.4 8.4 13.9 9.4 13.9 10.6 V16 A6.4 6.4 0 0 1 1.1 16.4"/><path d="M10.7 12.2 C9 13 7.8 15 7.4 17.6"/></svg>
<div style="left:1146.4px;top:796px;width:1px;height:26.6px;background:#555;"></div>
<svg style="left:1161px;top:796px;" width="26" height="26" viewBox="0 0 26 26" fill="none" stroke="#f2f2f2" stroke-width="1.4" stroke-linecap="round" stroke-linejoin="round"><path d="M16 3.1 A10.7 10.7 0 1 0 23.1 11.8"/><circle cx="9.1" cy="11.8" r=".9" fill="#f2f2f2"/><circle cx="16.1" cy="11.8" r=".9" fill="#f2f2f2"/><path d="M7.2 15.9 C9 20.2 16.4 20.2 18.2 15.5"/><path d="M19.7 3 V10 M16.2 6.5 H23.2"/></svg>
<div style="left:1213.7px;top:784.6px;width:49.4px;height:49.4px;background:transparent;border-radius:50%;box-shadow:inset 0 0 0 1px #4a4a4a;"></div>
<div style="left:1230.5px;top:808.5px;width:2.2px;height:2.2px;border-radius:50%;background:#f2f2f2;"></div>
<div style="left:1237.3000000000002px;top:808.5px;width:2.2px;height:2.2px;border-radius:50%;background:#f2f2f2;"></div>
<div style="left:1244.1000000000001px;top:808.5px;width:2.2px;height:2.2px;border-radius:50%;background:#f2f2f2;"></div>
<div style="left:1278.4px;top:784.7px;width:49.6px;height:49.6px;border-radius:50%;background:#dc2433;"></div>
<svg style="left:1294px;top:800.3px;" width="19" height="19" viewBox="0 0 19 19" fill="none" stroke="#ffffff" stroke-width="1.7" stroke-linecap="round" stroke-linejoin="round"><path d="M2.4 2.4 L16.4 16.4 M16.4 2.4 L2.4 16.4"/></svg>
<svg style="left:1420.5px;top:798.7px;" width="23" height="22" viewBox="0 0 23 22" fill="none" stroke="#f2f2f2" stroke-width="1.4" stroke-linecap="round" stroke-linejoin="round"><rect x="1.4" y="1.6" width="7" height="7" rx="1.8"/><rect x="1.4" y="12.2" width="7" height="7" rx="1.8"/><rect x="12" y="12.2" width="7" height="7" rx="1.8"/><path d="M15.6 1.4 V8.6 M12 5 H19.2"/></svg>
<svg style="left:1550.5px;top:798px;" width="24" height="23" viewBox="0 0 24 23" fill="none" stroke="#f2f2f2" stroke-width="1.4" stroke-linecap="round" stroke-linejoin="round"><circle cx="11" cy="5.8" r="4.2"/><path d="M10.6 20.4 H4 a2 2 0 0 1 -1.8 -3 C3.8 14 7 12.4 11 12.4 C12.4 12.4 13.8 12.6 15 13"/><path d="M14.6 15.4 H22.4 M14.6 18 H22.4 M14.6 20.6 H22.4" stroke-width="1.2"/></svg>
<svg style="left:1739.5px;top:798.7px;" width="23" height="22" viewBox="0 0 23 22" fill="none" stroke="#f2f2f2" stroke-width="1.5" stroke-linecap="round" stroke-linejoin="round"><path d="M11.6 1.6 a9 9 0 1 1 -4.6 16.8 L2 19.8 L3.6 15 A9 9 0 0 1 11.6 1.6 Z"/></svg>
<div style="left:1865.5px;top:808.1px;width:1.8px;height:1.8px;border-radius:50%;background:#d0d0d0;"></div>
<div style="left:1870.1px;top:808.1px;width:1.8px;height:1.8px;border-radius:50%;background:#d0d0d0;"></div>
<div style="left:1874.6999999999998px;top:808.1px;width:1.8px;height:1.8px;border-radius:50%;background:#d0d0d0;"></div>
<svg style="left:1526px;top:17px;" width="19" height="17" viewBox="0 0 19 17" fill="none" stroke="#e4e4e4" stroke-width="1.3" stroke-linecap="round" stroke-linejoin="round"><path d="M1.4 9.6 C4 6.8 7 3.2 9.4 1.8 C11.6 0.8 11.6 3.4 10.4 5.4 C9 7.8 6.6 10.6 7.6 11.6 C8.6 12.4 11.6 8 13.6 7.2 C15.6 6.6 14 10.4 13.6 12 C13.2 13.8 12.6 15 14 14.6 L17 12.4"/></svg>
<svg style="left:1568px;top:16px;" width="20" height="18" viewBox="0 0 20 18" fill="none" stroke="#e4e4e4" stroke-width="1.4" stroke-linecap="round" stroke-linejoin="round"><rect x="1.4" y="1.4" width="16.8" height="12" rx="2.6"/><path d="M6.4 15.8 H13.4 M7.6 13.6 V15.6 M12.2 13.6 V15.6"/><path d="M11.1 4.3 L15.2 8 L13.2 8.3 L11.3 9.8 Z" stroke-width="1"/></svg>
<svg style="left:1603px;top:233.5px;overflow:hidden;" width="307" height="172" viewBox="0 0 307 172"><defs><clipPath id="tc2"><rect width="307" height="172" rx="9"/></clipPath><linearGradient id="tg2" x1="0" x2="1"><stop offset="0" stop-color="#c5ead0"/><stop offset=".5" stop-color="#d0efd9"/><stop offset="1" stop-color="#c5ead0"/></linearGradient></defs><g clip-path="url(#tc2)"><rect width="307" height="172" fill="url(#tg2)"/><g fill="none" stroke="#779a84" stroke-width="0.9" opacity="0.7"><polyline points="0,37 78,37"/><polyline points="26,48.5 154,48.5"/><polyline points="29,71 60,71"/><polyline points="48,95 63,95"/><polyline points="40,108.8 22,108.8 0,86"/><polyline points="54.7,115 35.7,115 0,148.5"/><polyline points="0,162 38,126 67,126"/><polyline points="6.7,172 33.5,148.5 60,148.5"/><polyline points="20,172 35.7,158.5 58,158.5"/><polyline points="0,60 14,60 26,80 62,80"/><polyline points="228,9 257,9 284,32 307,32"/><polyline points="176,14.5 201,14.5 208,21 240,21"/><polyline points="225.5,59 266,59 290,84 307,84"/><polyline points="168.6,65.4 194,65.4 210,81 283.6,81 307,97"/><polyline points="219,68 241,68"/><polyline points="147,92.7 263.5,92.7"/><polyline points="187.6,112.3 281.4,112.3"/><polyline points="243.4,120.6 230,131.8 214.4,131.8"/><polyline points="253.5,135 307,135"/><polyline points="272.4,143.6 307,143.6"/><polyline points="207.7,159.2 260,159.2"/><polyline points="297,68 307,68"/><polyline points="250,126 266,126"/><polyline points="270,172 284,160 307,160"/><polyline points="283,120 307,104"/><polyline points="291,150 307,150"/></g><g fill="#779a84" opacity="0.7999999999999999"><circle cx="78" cy="38" r="2"/><circle cx="26" cy="48.5" r="2"/><circle cx="154" cy="48.5" r="2"/><circle cx="29" cy="71" r="2"/><circle cx="48" cy="95" r="2"/><circle cx="40" cy="108.8" r="2"/><circle cx="54.7" cy="115" r="2"/><circle cx="65" cy="136" r="2"/><circle cx="228" cy="9" r="2"/><circle cx="176" cy="14.5" r="2"/><circle cx="241" cy="14" r="2"/><circle cx="225.5" cy="59" r="2"/><circle cx="168.6" cy="65.4" r="2"/><circle cx="210" cy="81" r="2"/><circle cx="219" cy="68" r="2"/><circle cx="241" cy="64" r="2"/><circle cx="263.5" cy="92.7" r="2"/><circle cx="187.6" cy="112.3" r="2"/><circle cx="281.4" cy="112.3" r="2"/><circle cx="243.4" cy="120.6" r="2"/><circle cx="214.4" cy="131.8" r="2"/><circle cx="266" cy="128" r="2"/><circle cx="253.5" cy="139" r="2"/><circle cx="272.4" cy="143.6" r="2"/><circle cx="260" cy="159.2" r="2"/><circle cx="294.8" cy="154.8" r="2"/><circle cx="297" cy="68" r="2"/><circle cx="303" cy="97" r="2"/><circle cx="63" cy="95" r="2"/><circle cx="83" cy="38" r="2"/></g><polygon points="0,10 102.5,10 91,29 0,29" fill="#2f6a3e"/><polygon points="102.5,10 106,12 93,34.5 0,34.5 0,29 91,29" fill="#8fd08d"/><polygon points="135,20.8 307,20.8 307,41 122.6,41" fill="#8fd08d"/><polygon points="128,20.8 135,20.8 122.6,41 307,41 307,45.4 117,45.4" fill="#2f6a3e"/><polygon points="238.6,0 307,0 307,11.8 254,11.8" fill="#a6dba6"/><polygon points="236,0 241,0 256,11.8 251,10" fill="#2f6a3e" opacity=".7"/><circle cx="262" cy="5.8" r="3.6" fill="#c2202c"/><circle cx="299" cy="5.8" r="4.4" fill="#eef0f4"/><circle cx="299.6" cy="6.2" r="2.2" fill="#c84a5a"/><circle cx="297" cy="4.6" r="1.6" fill="#3a62c0"/></g></svg>
<svg style="left:1603px;top:414.5px;overflow:hidden;" width="307" height="172" viewBox="0 0 307 172"><defs><clipPath id="tc3"><rect width="307" height="172" rx="9"/></clipPath><linearGradient id="tg3" x1="0" x2="1"><stop offset="0" stop-color="#c5ead0"/><stop offset=".5" stop-color="#d0efd9"/><stop offset="1" stop-color="#c5ead0"/></linearGradient></defs><g clip-path="url(#tc3)"><rect width="307" height="172" fill="url(#tg3)"/><g fill="none" stroke="#779a84" stroke-width="0.9" opacity="0.7"><polyline points="0,37 78,37"/><polyline points="26,48.5 154,48.5"/><polyline points="29,71 60,71"/><polyline points="48,95 63,95"/><polyline points="40,108.8 22,108.8 0,86"/><polyline points="54.7,115 35.7,115 0,148.5"/><polyline points="0,162 38,126 67,126"/><polyline points="6.7,172 33.5,148.5 60,148.5"/><polyline points="20,172 35.7,158.5 58,158.5"/><polyline points="0,60 14,60 26,80 62,80"/><polyline points="228,9 257,9 284,32 307,32"/><polyline points="176,14.5 201,14.5 208,21 240,21"/><polyline points="225.5,59 266,59 290,84 307,84"/><polyline points="168.6,65.4 194,65.4 210,81 283.6,81 307,97"/><polyline points="219,68 241,68"/><polyline points="147,92.7 263.5,92.7"/><polyline points="187.6,112.3 281.4,112.3"/><polyline points="243.4,120.6 230,131.8 214.4,131.8"/><polyline points="253.5,135 307,135"/><polyline points="272.4,143.6 307,143.6"/><polyline points="207.7,159.2 260,159.2"/><polyline points="297,68 307,68"/><polyline points="250,126 266,126"/><polyline points="270,172 284,160 307,160"/><polyline points="283,120 307,104"/><polyline points="291,150 307,150"/></g><g fill="#779a84" opacity="0.7999999999999999"><circle cx="78" cy="38" r="2"/><circle cx="26" cy="48.5" r="2"/><circle cx="154" cy="48.5" r="2"/><circle cx="29" cy="71" r="2"/><circle cx="48" cy="95" r="2"/><circle cx="40" cy="108.8" r="2"/><circle cx="54.7" cy="115" r="2"/><circle cx="65" cy="136" r="2"/><circle cx="228" cy="9" r="2"/><circle cx="176" cy="14.5" r="2"/><circle cx="241" cy="14" r="2"/><circle cx="225.5" cy="59" r="2"/><circle cx="168.6" cy="65.4" r="2"/><circle cx="210" cy="81" r="2"/><circle cx="219" cy="68" r="2"/><circle cx="241" cy="64" r="2"/><circle cx="263.5" cy="92.7" r="2"/><circle cx="187.6" cy="112.3" r="2"/><circle cx="281.4" cy="112.3" r="2"/><circle cx="243.4" cy="120.6" r="2"/><circle cx="214.4" cy="131.8" r="2"/><circle cx="266" cy="128" r="2"/><circle cx="253.5" cy="139" r="2"/><circle cx="272.4" cy="143.6" r="2"/><circle cx="260" cy="159.2" r="2"/><circle cx="294.8" cy="154.8" r="2"/><circle cx="297" cy="68" r="2"/><circle cx="303" cy="97" r="2"/><circle cx="63" cy="95" r="2"/><circle cx="83" cy="38" r="2"/></g><polygon points="0,10 102.5,10 91,29 0,29" fill="#2f6a3e"/><polygon points="102.5,10 106,12 93,34.5 0,34.5 0,29 91,29" fill="#8fd08d"/><polygon points="135,20.8 307,20.8 307,41 122.6,41" fill="#8fd08d"/><polygon points="128,20.8 135,20.8 122.6,41 307,41 307,45.4 117,45.4" fill="#2f6a3e"/><polygon points="238.6,0 307,0 307,11.8 254,11.8" fill="#a6dba6"/><polygon points="236,0 241,0 256,11.8 251,10" fill="#2f6a3e" opacity=".7"/><circle cx="262" cy="5.8" r="3.6" fill="#c2202c"/><circle cx="299" cy="5.8" r="4.4" fill="#eef0f4"/><circle cx="299.6" cy="6.2" r="2.2" fill="#c84a5a"/><circle cx="297" cy="4.6" r="1.6" fill="#3a62c0"/></g></svg>
<svg style="left:1603px;top:595.5px;overflow:hidden;" width="307" height="172" viewBox="0 0 307 172"><defs><clipPath id="tc4"><rect width="307" height="172" rx="9"/></clipPath><linearGradient id="tg4" x1="0" x2="1"><stop offset="0" stop-color="#c5ead0"/><stop offset=".5" stop-color="#d0efd9"/><stop offset="1" stop-color="#c5ead0"/></linearGradient></defs><g clip-path="url(#tc4)"><rect width="307" height="172" fill="url(#tg4)"/><g fill="none" stroke="#779a84" stroke-width="0.9" opacity="0.7"><polyline points="0,37 78,37"/><polyline points="26,48.5 154,48.5"/><polyline points="29,71 60,71"/><polyline points="48,95 63,95"/><polyline points="40,108.8 22,108.8 0,86"/><polyline points="54.7,115 35.7,115 0,148.5"/><polyline points="0,162 38,126 67,126"/><polyline points="6.7,172 33.5,148.5 60,148.5"/><polyline points="20,172 35.7,158.5 58,158.5"/><polyline points="0,60 14,60 26,80 62,80"/><polyline points="228,9 257,9 284,32 307,32"/><polyline points="176,14.5 201,14.5 208,21 240,21"/><polyline points="225.5,59 266,59 290,84 307,84"/><polyline points="168.6,65.4 194,65.4 210,81 283.6,81 307,97"/><polyline points="219,68 241,68"/><polyline points="147,92.7 263.5,92.7"/><polyline points="187.6,112.3 281.4,112.3"/><polyline points="243.4,120.6 230,131.8 214.4,131.8"/><polyline points="253.5,135 307,135"/><polyline points="272.4,143.6 307,143.6"/><polyline points="207.7,159.2 260,159.2"/><polyline points="297,68 307,68"/><polyline points="250,126 266,126"/><polyline points="270,172 284,160 307,160"/><polyline points="283,120 307,104"/><polyline points="291,150 307,150"/></g><g fill="#779a84" opacity="0.7999999999999999"><circle cx="78" cy="38" r="2"/><circle cx="26" cy="48.5" r="2"/><circle cx="154" cy="48.5" r="2"/><circle cx="29" cy="71" r="2"/><circle cx="48" cy="95" r="2"/><circle cx="40" cy="108.8" r="2"/><circle cx="54.7" cy="115" r="2"/><circle cx="65" cy="136" r="2"/><circle cx="228" cy="9" r="2"/><circle cx="176" cy="14.5" r="2"/><circle cx="241" cy="14" r="2"/><circle cx="225.5" cy="59" r="2"/><circle cx="168.6" cy="65.4" r="2"/><circle cx="210" cy="81" r="2"/><circle cx="219" cy="68" r="2"/><circle cx="241" cy="64" r="2"/><circle cx="263.5" cy="92.7" r="2"/><circle cx="187.6" cy="112.3" r="2"/><circle cx="281.4" cy="112.3" r="2"/><circle cx="243.4" cy="120.6" r="2"/><circle cx="214.4" cy="131.8" r="2"/><circle cx="266" cy="128" r="2"/><circle cx="253.5" cy="139" r="2"/><circle cx="272.4" cy="143.6" r="2"/><circle cx="260" cy="159.2" r="2"/><circle cx="294.8" cy="154.8" r="2"/><circle cx="297" cy="68" r="2"/><circle cx="303" cy="97" r="2"/><circle cx="63" cy="95" r="2"/><circle cx="83" cy="38" r="2"/></g><polygon points="0,10 102.5,10 91,29 0,29" fill="#2f6a3e"/><polygon points="102.5,10 106,12 93,34.5 0,34.5 0,29 91,29" fill="#8fd08d"/><polygon points="135,20.8 307,20.8 307,41 122.6,41" fill="#8fd08d"/><polygon points="128,20.8 135,20.8 122.6,41 307,41 307,45.4 117,45.4" fill="#2f6a3e"/><polygon points="238.6,0 307,0 307,11.8 254,11.8" fill="#a6dba6"/><polygon points="236,0 241,0 256,11.8 251,10" fill="#2f6a3e" opacity=".7"/><circle cx="262" cy="5.8" r="3.6" fill="#c2202c"/><circle cx="299" cy="5.8" r="4.4" fill="#eef0f4"/><circle cx="299.6" cy="6.2" r="2.2" fill="#c84a5a"/><circle cx="297" cy="4.6" r="1.6" fill="#3a62c0"/></g></svg>
<div style="left:1602.1px;top:51.5px;width:308px;height:173.5px;background:#58a9f0;border-radius:10px;"></div>
<svg style="left:1605.8px;top:55.2px;overflow:hidden;" width="300.6" height="166" viewBox="0 0 300.6 166"><defs><clipPath id="tc1"><rect width="300.6" height="166" rx="6"/></clipPath><linearGradient id="tg1" x1="0" x2="1"><stop offset="0" stop-color="#d3e9db"/><stop offset=".45" stop-color="#e3f0e8"/><stop offset="1" stop-color="#d6eadd"/></linearGradient></defs><g clip-path="url(#tc1)"><rect width="300.6" height="166" fill="url(#tg1)"/><g transform="translate(-10,22) scale(1.05)"><g fill="none" stroke="#8aa893" stroke-width="0.9" opacity="0.5"><polyline points="0,37 78,37"/><polyline points="26,48.5 154,48.5"/><polyline points="29,71 60,71"/><polyline points="48,95 63,95"/><polyline points="40,108.8 22,108.8 0,86"/><polyline points="54.7,115 35.7,115 0,148.5"/><polyline points="0,162 38,126 67,126"/><polyline points="6.7,172 33.5,148.5 60,148.5"/><polyline points="20,172 35.7,158.5 58,158.5"/><polyline points="0,60 14,60 26,80 62,80"/><polyline points="228,9 257,9 284,32 307,32"/><polyline points="176,14.5 201,14.5 208,21 240,21"/><polyline points="225.5,59 266,59 290,84 307,84"/><polyline points="168.6,65.4 194,65.4 210,81 283.6,81 307,97"/><polyline points="219,68 241,68"/><polyline points="147,92.7 263.5,92.7"/><polyline points="187.6,112.3 281.4,112.3"/><polyline points="243.4,120.6 230,131.8 214.4,131.8"/><polyline points="253.5,135 307,135"/><polyline points="272.4,143.6 307,143.6"/><polyline points="207.7,159.2 260,159.2"/><polyline points="297,68 307,68"/><polyline points="250,126 266,126"/><polyline points="270,172 284,160 307,160"/><polyline points="283,120 307,104"/><polyline points="291,150 307,150"/></g><g fill="#8aa893" opacity="0.6"><circle cx="78" cy="38" r="2"/><circle cx="26" cy="48.5" r="2"/><circle cx="154" cy="48.5" r="2"/><circle cx="29" cy="71" r="2"/><circle cx="48" cy="95" r="2"/><circle cx="40" cy="108.8" r="2"/><circle cx="54.7" cy="115" r="2"/><circle cx="65" cy="136" r="2"/><circle cx="228" cy="9" r="2"/><circle cx="176" cy="14.5" r="2"/><circle cx="241" cy="14" r="2"/><circle cx="225.5" cy="59" r="2"/><circle cx="168.6" cy="65.4" r="2"/><circle cx="210" cy="81" r="2"/><circle cx="219" cy="68" r="2"/><circle cx="241" cy="64" r="2"/><circle cx="263.5" cy="92.7" r="2"/><circle cx="187.6" cy="112.3" r="2"/><circle cx="281.4" cy="112.3" r="2"/><circle cx="243.4" cy="120.6" r="2"/><circle cx="214.4" cy="131.8" r="2"/><circle cx="266" cy="128" r="2"/><circle cx="253.5" cy="139" r="2"/><circle cx="272.4" cy="143.6" r="2"/><circle cx="260" cy="159.2" r="2"/><circle cx="294.8" cy="154.8" r="2"/><circle cx="297" cy="68" r="2"/><circle cx="303" cy="97" r="2"/><circle cx="63" cy="95" r="2"/><circle cx="83" cy="38" r="2"/></g></g><polygon points="0,0 93.5,0 88,7.2 0,7.2" fill="#245231"/><polygon points="0,7.2 88,7.2 85,10.6 0,10.6" fill="#8fd08d"/><polygon points="110,1.4 301.2,1.4 301.2,37.4 92,37.4" fill="#86c782"/><polygon points="104,9 109.6,9 93,37.4 301.2,37.4 301.2,43.6 82.6,43.6" fill="#245231"/></g></svg>
<span class="t" style="left:11.50px;top:18.00px;font-size:17.3px;color:#f2f2f2;-webkit-text-stroke:0.3px #f2f2f2;transform:scaleX(0.9932);">Viewing Noraslinda Mohamed Ismail&#x27;s ...</span>
<span class="t" style="left:778.03px;top:18.00px;font-size:16.6px;color:#f2f2f2;-webkit-text-stroke:0.25px #f2f2f2;transform:scaleX(0.9383);">107%</span>
<span class="t" style="left:377.75px;top:241.20px;font-size:22.6px;color:#5a5a5a;-webkit-text-stroke:0.15px #5a5a5a;transform:scaleX(0.9549);">A</span>
<span class="t" style="left:560.86px;top:241.20px;font-size:22.6px;color:#5a5a5a;-webkit-text-stroke:0.15px #5a5a5a;transform:scaleX(0.9871);">B</span>
<span class="t" style="left:703.89px;top:241.20px;font-size:22.6px;color:#5a5a5a;-webkit-text-stroke:0.15px #5a5a5a;transform:scaleX(0.8565);">C</span>
<span class="t" style="left:847.21px;top:241.20px;font-size:22.6px;color:#3c7c4a;-webkit-text-stroke:0.15px #3c7c4a;transform:scaleX(1.0166);">D</span>
<span class="t" style="left:999.06px;top:241.20px;font-size:22.6px;color:#5a5a5a;-webkit-text-stroke:0.15px #5a5a5a;transform:scaleX(0.8738);">E</span>
<span class="t" style="left:1142.67px;top:241.20px;font-size:22.6px;color:#5a5a5a;-webkit-text-stroke:0.15px #5a5a5a;transform:scaleX(0.9204);">F</span>
<span class="t" style="left:1302.66px;top:241.20px;font-size:22.6px;color:#5a5a5a;-webkit-text-stroke:0.15px #5a5a5a;transform:scaleX(0.9844);">G</span>
<span class="t" style="left:245.84px;top:281.85px;font-size:22.6px;color:#5a5a5a;-webkit-text-stroke:0.12px #5a5a5a;transform:scaleX(1.0950);">2</span>
<span class="t" style="left:246.25px;top:316.10px;font-size:22.6px;color:#5a5a5a;-webkit-text-stroke:0.12px #5a5a5a;transform:scaleX(1.0597);">3</span>
<span class="t" style="left:246.65px;top:350.35px;font-size:22.6px;color:#5a5a5a;-webkit-text-stroke:0.12px #5a5a5a;transform:scaleX(0.9954);">4</span>
<span class="t" style="left:246.25px;top:384.60px;font-size:22.6px;color:#5a5a5a;-webkit-text-stroke:0.12px #5a5a5a;transform:scaleX(1.0597);">5</span>
<span class="t" style="left:245.84px;top:418.85px;font-size:22.6px;color:#5a5a5a;-webkit-text-stroke:0.12px #5a5a5a;transform:scaleX(1.0950);">6</span>
<span class="t" style="left:245.84px;top:453.10px;font-size:22.6px;color:#5a5a5a;-webkit-text-stroke:0.12px #5a5a5a;transform:scaleX(1.0950);">7</span>
<span class="t" style="left:246.25px;top:487.35px;font-size:22.6px;color:#3c7c4a;-webkit-text-stroke:0.12px #3c7c4a;transform:scaleX(1.0597);">8</span>
<span class="t" style="left:245.84px;top:521.60px;font-size:22.6px;color:#5a5a5a;-webkit-text-stroke:0.12px #5a5a5a;transform:scaleX(1.0950);">9</span>
<span class="t" style="left:239.34px;top:555.85px;font-size:22.6px;color:#5a5a5a;-webkit-text-stroke:0.12px #5a5a5a;transform:scaleX(1.0361);">10</span>
<span class="t" style="left:239.20px;top:590.10px;font-size:22.6px;color:#5a5a5a;-webkit-text-stroke:0.12px #5a5a5a;transform:scaleX(1.1357);">11</span>
<span class="t" style="left:239.31px;top:624.35px;font-size:22.6px;color:#5a5a5a;-webkit-text-stroke:0.12px #5a5a5a;transform:scaleX(1.0522);">12</span>
<span class="t" style="left:239.31px;top:658.60px;font-size:22.6px;color:#5a5a5a;-webkit-text-stroke:0.12px #5a5a5a;transform:scaleX(1.0522);">13</span>
<span class="t" style="left:239.34px;top:692.85px;font-size:22.6px;color:#5a5a5a;-webkit-text-stroke:0.12px #5a5a5a;transform:scaleX(1.0361);">14</span>
<span class="t" style="left:279.55px;top:316.10px;font-size:22.6px;color:#e0382f;font-weight:700;-webkit-text-stroke:0.5px #e0382f;transform:scaleX(0.9538);">PRODUCT</span>
<span class="t" style="left:497.48px;top:316.10px;font-size:22.6px;color:#e0382f;font-weight:700;-webkit-text-stroke:0.5px #e0382f;transform:scaleX(0.9330);">PRICE/PIECE</span>
<span class="t" style="left:646.81px;top:316.10px;font-size:22.6px;color:#e0382f;font-weight:700;-webkit-text-stroke:0.5px #e0382f;transform:scaleX(0.9786);">QUANTITY</span>
<span class="t" style="left:783.03px;top:316.10px;font-size:22.6px;color:#e0382f;font-weight:700;-webkit-text-stroke:0.5px #e0382f;transform:scaleX(1.0366);">AMOUNT</span>
<span class="t" style="left:279.24px;top:350.35px;font-size:22.6px;color:#0a0a0a;-webkit-text-stroke:0.7px #0a0a0a;transform:scaleX(0.9415);">KARIPAP</span>
<span class="t" style="left:279.18px;top:384.60px;font-size:22.6px;color:#0a0a0a;-webkit-text-stroke:0.7px #0a0a0a;transform:scaleX(0.9751);">LONTONG</span>
<span class="t" style="left:279.30px;top:418.85px;font-size:22.6px;color:#0a0a0a;-webkit-text-stroke:0.7px #0a0a0a;transform:scaleX(0.9038);">KERIA</span>
<span class="t" style="left:279.20px;top:453.10px;font-size:22.6px;color:#0a0a0a;-webkit-text-stroke:0.7px #0a0a0a;transform:scaleX(0.9616);">NASI LEMAK</span>
<span class="t" style="left:606.67px;top:350.35px;font-size:22.6px;color:#0a0a0a;-webkit-text-stroke:0.7px #0a0a0a;transform:scaleX(1.0316);">0.4</span>
<span class="t" style="left:607.07px;top:384.60px;font-size:22.6px;color:#0a0a0a;-webkit-text-stroke:0.7px #0a0a0a;transform:scaleX(1.0304);">3.5</span>
<span class="t" style="left:606.66px;top:418.85px;font-size:22.6px;color:#0a0a0a;-webkit-text-stroke:0.7px #0a0a0a;transform:scaleX(1.0438);">0.2</span>
<span class="t" style="left:607.04px;top:453.10px;font-size:22.6px;color:#0a0a0a;-webkit-text-stroke:0.7px #0a0a0a;transform:scaleX(1.0313);">1.5</span>
<span class="t" style="left:761.79px;top:350.35px;font-size:22.6px;color:#0a0a0a;-webkit-text-stroke:0.7px #0a0a0a;transform:scaleX(1.0478);">2</span>
<span class="t" style="left:762.18px;top:384.60px;font-size:22.6px;color:#0a0a0a;-webkit-text-stroke:0.7px #0a0a0a;transform:scaleX(1.0140);">3</span>
<span class="t" style="left:761.79px;top:418.85px;font-size:22.6px;color:#0a0a0a;-webkit-text-stroke:0.7px #0a0a0a;transform:scaleX(1.0478);">2</span>
<span class="t" style="left:743.04px;top:453.10px;font-size:22.6px;color:#0a0a0a;-webkit-text-stroke:0.7px #0a0a0a;transform:scaleX(1.0348);">1.5</span>
<span class="t" style="left:895.56px;top:350.35px;font-size:22.6px;color:#2447d9;-webkit-text-stroke:0.7px #2447d9;transform:scaleX(1.0539);">0.8</span>
<span class="t" style="left:883.55px;top:384.60px;font-size:22.6px;color:#2447d9;-webkit-text-stroke:0.7px #2447d9;transform:scaleX(1.0250);">10.5</span>
<span class="t" style="left:895.56px;top:418.85px;font-size:22.6px;color:#2447d9;-webkit-text-stroke:0.7px #2447d9;transform:scaleX(1.0415);">0.4</span>
<span class="t" style="left:883.61px;top:453.10px;font-size:22.6px;color:#2447d9;-webkit-text-stroke:0.7px #2447d9;transform:scaleX(1.0283);">2.25</span>
<span class="t" style="left:783.13px;top:487.65px;font-size:22.6px;color:#2b50cc;-webkit-text-stroke:0.25px #2b50cc;transform:scaleX(1.0088);">=sum(</span>
<span class="t" style="left:847.25px;top:487.65px;font-size:22.6px;color:#4a74bd;-webkit-text-stroke:0.25px #4a74bd;transform:scaleX(0.9935);">B4:B7</span>
<span class="t" style="left:909.92px;top:487.65px;font-size:22.6px;color:#2b50cc;-webkit-text-stroke:0.25px #2b50cc;transform:scaleX(1.0712);">*</span>
<span class="t" style="left:920.69px;top:487.65px;font-size:22.6px;color:#b4494f;-webkit-text-stroke:0.25px #b4494f;transform:scaleX(0.9487);">C4:C7</span>
<span class="t" style="left:280.80px;top:590.10px;font-size:22.6px;color:#0a0a0a;font-weight:700;-webkit-text-stroke:0.5px #0a0a0a;transform:scaleX(0.9177);">TASK 2</span>
<span class="t" style="left:280.45px;top:658.60px;font-size:22.6px;color:#0a0a0a;-webkit-text-stroke:0.7px #0a0a0a;transform:scaleX(0.9955);">Type of Facemasks</span>
<span class="t" style="left:496.86px;top:658.60px;font-size:22.6px;color:#e0382f;-webkit-text-stroke:0.7px #e0382f;transform:scaleX(1.0396);">Length (cm)</span>
<span class="t" style="left:648.00px;top:658.60px;font-size:22.6px;color:#e0382f;-webkit-text-stroke:0.7px #e0382f;transform:scaleX(1.0717);">Width (cm)</span>
<span class="t" style="left:780.91px;top:658.60px;font-size:22.6px;color:#e0382f;-webkit-text-stroke:0.7px #e0382f;transform:scaleX(1.0730);">Length (inch)</span>
<span class="t" style="left:936.70px;top:658.60px;font-size:22.6px;color:#e0382f;-webkit-text-stroke:0.7px #e0382f;transform:scaleX(1.0939);">Width (inch)</span>
<span class="t" style="left:1223.00px;top:658.60px;font-size:22.6px;color:#2348e0;font-weight:700;-webkit-text-stroke:0.5px #2348e0;transform:scaleX(0.9859);">Conversion</span>
<span class="t" style="left:278.98px;top:692.85px;font-size:22.6px;color:#0a0a0a;-webkit-text-stroke:0.7px #0a0a0a;transform:scaleX(1.0302);">Disneyz</span>
<span class="t" style="left:613.15px;top:692.85px;font-size:22.6px;color:#0a0a0a;-webkit-text-stroke:0.7px #0a0a0a;transform:scaleX(1.0259);">15</span>
<span class="t" style="left:743.42px;top:692.85px;font-size:22.6px;color:#0a0a0a;-webkit-text-stroke:0.7px #0a0a0a;transform:scaleX(1.0224);">2.5</span>
<span class="t" style="left:1327.86px;top:692.85px;font-size:22.6px;color:#0a0a0a;-webkit-text-stroke:0.7px #0a0a0a;transform:scaleX(1.0539);">0.3</span>
<span class="t" style="left:799.54px;top:520.50px;font-size:11.6px;color:#4f83d6;">SUM</span>
<span class="t" style="left:824.75px;top:520.50px;font-size:11.6px;color:#3a3a3a;transform:scaleX(1.0115);">(</span>
<span class="t" style="left:828.55px;top:520.50px;font-size:11.6px;color:#2c5fc6;font-weight:700;transform:scaleX(1.0360);">number1</span>
<span class="t" style="left:878.92px;top:520.50px;font-size:11.6px;color:#3a3a3a;transform:scaleX(1.1913);">, [number2], ...)</span>
<span class="t" style="left:327.00px;top:60.40px;font-size:12.4px;color:#dcebdd;-webkit-text-stroke:0.4px #dcebdd;transform:scaleX(1.0231);">AutoSave</span>
<span class="t" style="left:409.21px;top:62.40px;font-size:8.6px;color:#e8efe8;font-weight:700;transform:scaleX(1.0814);">OFF</span>
<span class="t" style="left:736.70px;top:59.40px;font-size:14.4px;color:#f4f8f4;font-weight:700;">Bengkel MS Excel</span>
<span class="t" style="left:240.58px;top:92.20px;font-size:13.6px;color:#262626;font-weight:700;transform:scaleX(1.0793);">Home</span>
<span class="t" style="left:305.78px;top:92.20px;font-size:13.6px;color:#3b3b3b;-webkit-text-stroke:0.3px #3b3b3b;transform:scaleX(1.1516);">Insert</span>
<span class="t" style="left:371.64px;top:92.20px;font-size:13.6px;color:#3b3b3b;-webkit-text-stroke:0.3px #3b3b3b;transform:scaleX(1.0895);">Draw</span>
<span class="t" style="left:432.15px;top:92.20px;font-size:13.6px;color:#3b3b3b;-webkit-text-stroke:0.3px #3b3b3b;transform:scaleX(1.0842);">Page Layout</span>
<span class="t" style="left:542.83px;top:92.20px;font-size:13.6px;color:#3b3b3b;-webkit-text-stroke:0.3px #3b3b3b;transform:scaleX(1.1053);">Formulas</span>
<span class="t" style="left:631.83px;top:92.20px;font-size:13.6px;color:#3b3b3b;-webkit-text-stroke:0.3px #3b3b3b;transform:scaleX(1.1027);">Data</span>
<span class="t" style="left:688.46px;top:92.20px;font-size:13.6px;color:#3b3b3b;-webkit-text-stroke:0.3px #3b3b3b;transform:scaleX(1.0733);">Review</span>
<span class="t" style="left:763.40px;top:92.20px;font-size:13.6px;color:#3b3b3b;-webkit-text-stroke:0.3px #3b3b3b;transform:scaleX(1.0749);">View</span>
<span class="t" style="left:822.30px;top:92.20px;font-size:13.6px;color:#3b3b3b;-webkit-text-stroke:0.3px #3b3b3b;transform:scaleX(1.1099);">Automate</span>
<span class="t" style="left:913.23px;top:92.20px;font-size:13.6px;color:#3b3b3b;-webkit-text-stroke:0.3px #3b3b3b;transform:scaleX(1.1058);">Developer</span>
<span class="t" style="left:1024.77px;top:92.20px;font-size:13.6px;color:#3b3b3b;-webkit-text-stroke:0.3px #3b3b3b;transform:scaleX(1.0777);">Tell me</span>
<span class="t" style="left:1172.29px;top:94.30px;font-size:13.2px;color:#4a6350;font-weight:700;">Comments</span>
<span class="t" style="left:1303.79px;top:94.30px;font-size:13.2px;color:#4a4f4b;font-weight:700;transform:scaleX(0.9958);">Share</span>
<span class="t" style="left:250.06px;top:163.30px;font-size:11.8px;color:#2e2e2e;-webkit-text-stroke:0.4px #2e2e2e;transform:scaleX(1.0148);">Paste</span>
<span class="t" style="left:359.55px;top:133.00px;font-size:12.8px;color:#8d8d8d;transform:scaleX(1.0751);">Calibri (Body)</span>
<span class="t" style="left:514.16px;top:133.00px;font-size:12.8px;color:#8d8d8d;transform:scaleX(0.9211);">12</span>
<span class="t" style="left:573.40px;top:128.40px;font-size:18.5px;color:#a9a9a9;transform:scaleX(0.9735);">A</span>
<span class="t" style="left:603.00px;top:130.40px;font-size:15.5px;color:#a9a9a9;transform:scaleX(0.9794);">A</span>
<span class="t" style="left:361.90px;top:165.50px;font-size:13.8px;color:#b5b5b5;font-weight:700;transform:scaleX(0.9275);">B</span>
<span class="t" style="left:389.82px;top:165.50px;font-size:14px;color:#b5b5b5;font-style:italic;font-family:'Liberation Serif', serif;transform:scaleX(1.4629);">I</span>
<span class="t" style="left:416.35px;top:164.60px;font-size:13.2px;color:#b5b5b5;transform:scaleX(1.1483);">U</span>
<span class="t" style="left:572.00px;top:163.00px;font-size:16px;color:#b9b9b9;transform:scaleX(1.1163);">A</span>
<span class="t" style="left:647.50px;top:163.30px;font-size:11.8px;color:#2e2e2e;-webkit-text-stroke:0.3px #2e2e2e;transform:scaleX(1.0226);">Alignment</span>
<span class="t" style="left:729.65px;top:163.30px;font-size:11.8px;color:#2e2e2e;-webkit-text-stroke:0.3px #2e2e2e;transform:scaleX(1.0271);">Number</span>
<span class="t" style="left:828.22px;top:127.20px;font-size:11.8px;color:#9a9a9a;-webkit-text-stroke:0.25px #9a9a9a;transform:scaleX(1.0485);">Conditional Formatting</span>
<span class="t" style="left:827.85px;top:150.80px;font-size:11.8px;color:#9a9a9a;-webkit-text-stroke:0.25px #9a9a9a;transform:scaleX(1.0301);">Format as Table</span>
<span class="t" style="left:828.23px;top:174.20px;font-size:11.8px;color:#9a9a9a;-webkit-text-stroke:0.25px #9a9a9a;transform:scaleX(1.0252);">Cell Styles</span>
<span class="t" style="left:1003.43px;top:163.60px;font-size:11.8px;color:#2e2e2e;-webkit-text-stroke:0.3px #2e2e2e;transform:scaleX(1.0274);">Cells</span>
<span class="t" style="left:1072.02px;top:163.60px;font-size:11.8px;color:#2e2e2e;-webkit-text-stroke:0.3px #2e2e2e;transform:scaleX(1.0668);">Editing</span>
<span class="t" style="left:1142.91px;top:163.60px;font-size:11.8px;color:#a6a6a6;-webkit-text-stroke:0.25px #a6a6a6;transform:scaleX(1.0560);">Sensitivity</span>
<span class="t" style="left:1227.20px;top:163.60px;font-size:11.8px;color:#a0a0a0;-webkit-text-stroke:0.25px #a0a0a0;">Analyse</span>
<span class="t" style="left:1234.67px;top:176.50px;font-size:11.8px;color:#a0a0a0;-webkit-text-stroke:0.25px #a0a0a0;transform:scaleX(1.0134);">Data</span>
<span class="t" style="left:1296.43px;top:163.60px;font-size:11.8px;color:#2e2e2e;-webkit-text-stroke:0.3px #2e2e2e;">Solver</span>
<span class="t" style="left:239.48px;top:203.80px;font-size:12.8px;color:#3c3c3c;-webkit-text-stroke:0.3px #3c3c3c;transform:scaleX(1.0448);">SUM</span>
<span class="t" style="left:400.40px;top:199.80px;font-size:18px;color:#3a3a3a;font-style:italic;font-family:'Liberation Serif', serif;-webkit-text-stroke:0.35px #3a3a3a;transform:scaleX(1.1028);">fx</span>
<span class="t" style="left:431.38px;top:204.50px;font-size:12.6px;color:#454545;-webkit-text-stroke:0.25px #454545;transform:scaleX(1.0559);">=sum(B4:B7*C4:C7</span>
<span class="t" style="left:316.60px;top:725.80px;font-size:13.2px;color:#3f8a52;font-weight:700;transform:scaleX(0.9657);">CELL REF</span>
<span class="t" style="left:420.40px;top:725.80px;font-size:13.2px;color:#616161;-webkit-text-stroke:0.25px #616161;transform:scaleX(0.9641);">CONCATENATE &amp; CONCAT</span>
<span class="t" style="left:624.80px;top:725.80px;font-size:13.2px;color:#616161;-webkit-text-stroke:0.25px #616161;transform:scaleX(0.9574);">TEXTSPLIT</span>
<span class="t" style="left:728.84px;top:725.80px;font-size:13.2px;color:#616161;-webkit-text-stroke:0.25px #616161;transform:scaleX(1.0278);">MAXMIN</span>
<span class="t" style="left:822.99px;top:725.80px;font-size:13.2px;color:#616161;-webkit-text-stroke:0.25px #616161;transform:scaleX(0.9846);">SUMIF</span>
<span class="t" style="left:904.29px;top:725.80px;font-size:13.2px;color:#616161;-webkit-text-stroke:0.25px #616161;transform:scaleX(0.9857);">SUMIFS</span>
<span class="t" style="left:991.50px;top:725.80px;font-size:13.2px;color:#616161;-webkit-text-stroke:0.25px #616161;transform:scaleX(0.9794);">SUMIFS - DATE</span>
<span class="t" style="left:1123.40px;top:725.80px;font-size:13.2px;color:#616161;-webkit-text-stroke:0.25px #616161;transform:scaleX(0.9721);">COUNTIF</span>
<span class="t" style="left:1217.38px;top:725.80px;font-size:13.2px;color:#616161;-webkit-text-stroke:0.25px #616161;">COUNTIFS</span>
<span class="t" style="left:254.12px;top:753.00px;font-size:12.6px;color:#6a6a6a;transform:scaleX(1.0944);">Point</span>
<span class="t" style="left:1296.15px;top:753.00px;font-size:12.6px;color:#6a6a6a;transform:scaleX(1.1068);">200%</span>
<span class="t" style="left:37.96px;top:804.50px;font-size:8.8px;color:#f2f2f2;font-weight:700;transform:scaleX(0.8804);">CC</span>
<span class="t" style="left:626.67px;top:802.80px;font-size:18.8px;color:#f2f2f2;-webkit-text-stroke:0.6px #f2f2f2;transform:scaleX(1.1332);">Unmute</span>
<span class="t" style="left:810.16px;top:802.80px;font-size:18.8px;color:#f2f2f2;-webkit-text-stroke:0.6px #f2f2f2;transform:scaleX(1.0870);">Stop video</span>
<span class="t" style="left:1010.00px;top:802.80px;font-size:18.8px;color:#f2f2f2;-webkit-text-stroke:0.6px #f2f2f2;transform:scaleX(1.0181);">Share</span>
<span class="t" style="left:1454.50px;top:802.40px;font-size:18.8px;color:#f2f2f2;-webkit-text-stroke:0.3px #f2f2f2;transform:scaleX(1.0624);">Apps</span>
<span class="t" style="left:1583.11px;top:802.40px;font-size:18.8px;color:#f2f2f2;-webkit-text-stroke:0.3px #f2f2f2;transform:scaleX(1.0815);">Participants</span>
<span class="t" style="left:1772.39px;top:802.40px;font-size:18.8px;color:#f2f2f2;-webkit-text-stroke:0.3px #f2f2f2;transform:scaleX(1.0336);">Chat</span>
<span class="t" style="left:1618.29px;top:247.50px;font-size:13.6px;color:#f1f7f1;font-weight:700;font-style:italic;letter-spacing:6px;-webkit-text-stroke:0.5px #f1f7f1;transform:scaleX(0.5373);">BENGKEL</span>
<span class="t" style="left:1756.04px;top:256.30px;font-size:16.2px;color:#143a22;font-weight:700;font-style:italic;letter-spacing:4.5px;-webkit-text-stroke:0.9px #143a22;transform:scaleX(0.6147);">MICROSOFT EXCEL</span>
<span class="t" style="left:1868.87px;top:235.70px;font-size:8.6px;color:#b0202c;font-weight:700;font-family:'Liberation Serif', serif;transform:scaleX(0.9422);">UTM</span>
<span class="t" style="left:1618.29px;top:428.50px;font-size:13.6px;color:#f1f7f1;font-weight:700;font-style:italic;letter-spacing:6px;-webkit-text-stroke:0.5px #f1f7f1;transform:scaleX(0.5373);">BENGKEL</span>
<span class="t" style="left:1756.04px;top:437.30px;font-size:16.2px;color:#143a22;font-weight:700;font-style:italic;letter-spacing:4.5px;-webkit-text-stroke:0.9px #143a22;transform:scaleX(0.6147);">MICROSOFT EXCEL</span>
<span class="t" style="left:1868.87px;top:416.70px;font-size:8.6px;color:#b0202c;font-weight:700;font-family:'Liberation Serif', serif;transform:scaleX(0.9422);">UTM</span>
<span class="t" style="left:1618.29px;top:609.50px;font-size:13.6px;color:#f1f7f1;font-weight:700;font-style:italic;letter-spacing:6px;-webkit-text-stroke:0.5px #f1f7f1;transform:scaleX(0.5373);">BENGKEL</span>
<span class="t" style="left:1756.04px;top:618.30px;font-size:16.2px;color:#143a22;font-weight:700;font-style:italic;letter-spacing:4.5px;-webkit-text-stroke:0.9px #143a22;transform:scaleX(0.6147);">MICROSOFT EXCEL</span>
<span class="t" style="left:1868.87px;top:597.70px;font-size:8.6px;color:#b0202c;font-weight:700;font-family:'Liberation Serif', serif;transform:scaleX(0.9422);">UTM</span>
<span class="t" style="left:1720.80px;top:62.00px;font-size:24.4px;color:#143a24;font-weight:700;font-style:italic;letter-spacing:7px;-webkit-text-stroke:1.2px #143a24;transform:scaleX(0.5227);">MICROSOFT EXCEL</span>
<div style="left:1252px;top:719px;width:32px;height:25px;background:linear-gradient(90deg,rgba(241,241,241,0),#f1f1f1 85%);"></div>
<svg style="left:1605.8px;top:55.2px;overflow:hidden;" width="300.6" height="166" viewBox="0 0 300.6 166"><defs><clipPath id="pc1"><rect width="300.6" height="166" rx="6"/></clipPath><filter id="bl1"><feGaussianBlur stdDeviation="0.6"/></filter></defs><g clip-path="url(#pc1)"><g filter="url(#bl1)"><path d="M160 43.6 C142 43.6 130 56 126 76 C122 96 119 120 118 140 L110 166 H224 L215 134 C206 126 201 116 199 100 C197 76 192 58 182 50 C176 45 168 43.6 160 43.6 Z" fill="#b59196"/><path d="M133 62 C127 84 123 110 121 138 L135 138 C131 110 133 86 142 62 Z" fill="#d9c3c3" opacity=".85"/><path d="M186 60 C194 84 196 108 202 126 L214 136 L206 140 L188 120 Z" fill="#9a777c" opacity=".8"/><path d="M112 166 L118 134 C132 140 146 146 162 146 C180 146 196 140 210 130 L224 166 Z" fill="#4b3b3e"/><ellipse cx="161.6" cy="95.5" rx="29.5" ry="39" fill="#c39a8c"/><path d="M136 66 C142 52 152 46 162 46 C173 46 182 52 187 66 C178 58 171 55.5 162 55.5 C152 55.5 144 58 136 66 Z" fill="#6b4b4d"/><path d="M135 80 C139 66 150 58 162 58 C174 58 184 66 188 80 C180 70 172 66 162 66 C151 66 142 70 135 80 Z" fill="#b38e8a" opacity=".7"/><ellipse cx="144.5" cy="86" rx="7.5" ry="2.6" fill="#4e3536" opacity=".75"/><ellipse cx="177.5" cy="84.6" rx="7.5" ry="2.6" fill="#4e3536" opacity=".75"/><path d="M136 78 C142 75 148 75 153 77 M170 76 C175 74 181 74 186 77" stroke="#6a4a48" stroke-width="1.6" fill="none" opacity=".7"/><ellipse cx="163" cy="103" rx="8" ry="3.2" fill="#8d5f57" opacity=".65"/><ellipse cx="166" cy="115.5" rx="13" ry="4.4" fill="#8a474c" opacity=".75"/><ellipse cx="161" cy="128" rx="20" ry="7" fill="#a97f76" opacity=".45"/></g></g></svg>
<div style="left:1607px;top:190.4px;width:250.6px;height:30px;background:rgba(52,52,52,.86);border-radius:5px;"></div>
<svg style="left:1832px;top:198.6px;" width="20" height="14" viewBox="0 0 20 14" fill="none" stroke="#f4f4f4" stroke-width="1.3" stroke-linecap="round" stroke-linejoin="round"><rect x="1.2" y="1.2" width="17.4" height="11.4" rx="2.4"/><path d="M9.9 9.8 V4.6 M7.6 6.6 L9.9 4.2 L12.2 6.6"/></svg>
<svg style="left:1603px;top:233.5px;overflow:hidden;" width="307" height="172" viewBox="0 0 307 172"><defs><clipPath id="pc2"><rect width="307" height="172" rx="9"/></clipPath><filter id="bl2"><feGaussianBlur stdDeviation="0.6"/></filter></defs><g clip-path="url(#pc2)"><g filter="url(#bl2)"><path d="M57 172 C58 160 60 152 64 148 C70 142 76 138 82 136 L150 150 C160 140 166 126 173 120 C184 122 194 132 200 146 C204 156 206 164 207.5 172 Z" fill="#a1145b"/><path d="M98 38 C76 38 61 56 61 76 C61 88 62 98 65 106 C68 118 74 128 81 134 C90 146 104 160 126 162.5 C138 162 148 158 152 152 C160 144 166 132 173 120 C160 114 150 108 147 100 C144 76 136 50 120 42 C112 38 104 38 98 38 Z" fill="#d6d3cf"/><path d="M120 44 C134 56 140 80 143 100 C146 110 156 116 168 121 C160 136 152 150 146 154 C150 130 142 112 132 104 C128 82 126 60 120 44 Z" fill="#c4c1bd" opacity=".8"/><path d="M69 111.5 C78 104 90 101 100 101 C110 101.5 120 104 126 106.5 C134 110 139 118 138.5 126 C138 136 132 146 122 153.5 C116 156 108 154 102 150 C94 144 84 134 76 124 C72 119 70 115 69 111.5 Z" fill="#dbb0a6"/><path d="M72 113 C76 112 84 114 90 118 M108 112 C114 108 120 108 126 110" stroke="#3b2a2a" stroke-width="2.6" fill="none" opacity=".85"/><ellipse cx="80" cy="119" rx="4.6" ry="2" fill="#2e2222" opacity=".8"/><ellipse cx="115.5" cy="113" rx="4.6" ry="2" fill="#2e2222" opacity=".8"/><path d="M101 116 C99 124 99 131 104 135" stroke="#f1d8d0" stroke-width="5.5" fill="none" opacity=".85" stroke-linecap="round"/><ellipse cx="112" cy="147.5" rx="8.5" ry="2.8" fill="#b35a64"/></g></g></svg>
<svg style="left:1603px;top:414.5px;overflow:hidden;" width="307" height="172" viewBox="0 0 307 172"><defs><clipPath id="pc3"><rect width="307" height="172" rx="9"/></clipPath><filter id="bl3"><feGaussianBlur stdDeviation="0.6"/></filter></defs><g clip-path="url(#pc3)"><g filter="url(#bl3)"><path d="M23 172 C28 156 38 146 50 140 C66 132 84 126 98 122 L116 116 H174 L196 122 C214 124 226 134 236 146 C244 156 250 164 255 172 Z" fill="#8b9199"/><path d="M23 172 C28 156 38 146 50 140 C64 132 82 128 96 124 C98 130 96 134 90 136 C76 140 64 146 58 150 C50 156 46 164 44 172 Z" fill="#1e2a4c"/><path d="M50 140 C64 132 82 128 96 125 C99 130 97 135 90 137 L58 148 Z" fill="#1a2544"/><path d="M116 116 C112 128 112 140 118 150 C122 158 126 164 128 172 H100 C100 158 104 140 106 128 Z" fill="#1f2b4e"/><path d="M174 107 C184 112 192 118 196 124 C190 136 184 150 182 172 H172 C174 150 176 128 174 107 Z" fill="#1b2647"/><path d="M214 120 C230 128 242 146 255 172 H214 C216 152 216 136 214 120 Z" fill="#1b2647"/><path d="M124 146 C136 152 158 148 170 132 L178 150 L180 172 H132 Z" fill="#e4e4e4"/><path d="M122 100 H172 V136 C160 150 136 152 124 144 Z" fill="#b07f6a"/><path d="M103 66 C102 50 108 40 120 36 H160 C170 40 176 50 177 66 C179 72 181 78 179 86 C178 92 176 96 174 98 C172 112 164 124 152 130 C146 133 136 133 130 130 C118 124 110 112 107 98 C104 94 102 88 102 82 C101 76 102 70 103 66 Z" fill="#bd8b76"/><path d="M98 62 C92 40 104 18 128 12 C134 6 146 4 152 8 C160 8 164 12 164 16 C170 24 174.5 36 176 50 C177 58 176.6 62 175 68 C174 58 171 52 166 46 C160 42 150 40 140 42 C128 44 116 48 110 54 C106 60 104 68 103 76 C100 72 99 68 98 62 Z" fill="#26252a"/><circle cx="116.5" cy="86" r="12.4" fill="#c99a86" fill-opacity=".35" stroke="#3a3030" stroke-width="1.3"/><circle cx="153.5" cy="82" r="12.8" fill="#c99a86" fill-opacity=".35" stroke="#3a3030" stroke-width="1.3"/><path d="M129 84.6 C133 82 137 82 140.6 83.4 M166 79 L177 72" stroke="#3a3030" stroke-width="1.3" fill="none"/><path d="M109 71 C114 68 122 68 128 70 M143 67.6 C150 64.6 157 64.4 163 66" stroke="#2a1e1e" stroke-width="2.6" fill="none"/><ellipse cx="118" cy="80.5" rx="5" ry="2.2" fill="#231a1a"/><ellipse cx="151" cy="76.5" rx="5" ry="2.2" fill="#231a1a"/><path d="M131 97 C133 100 138 100 141 97" stroke="#8a5a4c" stroke-width="2" fill="none"/><path d="M126 109 C132 106 142 106 148 109 C142 108.4 132 108.4 126 109 Z" stroke="#5a3a32" stroke-width="2" fill="#5a3a32" opacity=".8"/><path d="M127 111.5 C133 110 141 110 147 111.5 C141 116 133 116 127 111.5 Z" fill="#8e5348"/></g></g></svg>
<svg style="left:1603px;top:595.5px;overflow:hidden;" width="307" height="172" viewBox="0 0 307 172"><defs><clipPath id="pc4"><rect width="307" height="172" rx="9"/></clipPath><filter id="bl4"><feGaussianBlur stdDeviation="0.6"/></filter></defs><g clip-path="url(#pc4)"><g filter="url(#bl4)"><path d="M93 172 C98 162 106 157 116 155 H220 C230 158 238 164 242 172 Z" fill="#a81f2b"/><path d="M169.6 56.6 C152 57 140 68 137 84 C133 100 131 118 127 134 C124 146 118 154 112.5 158 L110 172 H226 L224 156 C218 150 214 140 210 126 C206 110 204 94 200 80 C196 66 186 56.4 169.6 56.6 Z" fill="#1c1a1e"/><ellipse cx="172" cy="112.5" rx="28" ry="38" fill="#dba899"/><path d="M141 104 C144 84 156 74 171 74 C186 74 198 84 202 104 C196 90 186 84 172 84 C158 84 148 90 141 104 Z" fill="#1f1c20"/><path d="M142 99 C150 96.6 160 96.6 166.6 98.6 C166.6 108 162 112.6 154 112.6 C146 112.6 142 108 142 99 Z M178.6 98.6 C186 96.6 196 96.6 202.4 99 C202.4 108 198 112.6 190 112.6 C182 112.6 178.6 108 178.6 98.6 Z M166.6 99.6 H178.6" stroke="#eef1f1" stroke-width="1.6" fill="#f0dcd6" fill-opacity=".3" opacity=".9"/><path d="M146 94 C150 92 158 92 162 94 M182 94 C186 92 194 92 198 94" stroke="#4a3030" stroke-width="1.6" fill="none" opacity=".7"/><ellipse cx="155" cy="102" rx="5" ry="2.2" fill="#3a2828" opacity=".8"/><ellipse cx="189" cy="102" rx="5" ry="2.2" fill="#3a2828" opacity=".8"/><ellipse cx="172" cy="117" rx="6" ry="2.4" fill="#b07c70" opacity=".7"/><ellipse cx="172.5" cy="130.4" rx="10" ry="5.2" fill="#bf5a56"/></g></g></svg>
<svg style="left:697.5px;top:447.5px;filter:drop-shadow(0 1px 1px rgba(0,0,0,.35));" width="18" height="18" viewBox="0 0 18 18"><path d="M6.6 1.2 H11.4 V6.6 H16.8 V11.4 H11.4 V16.8 H6.6 V11.4 H1.2 V6.6 H6.6 Z" fill="#ffffff" stroke="#1a1a1a" stroke-width="1.1" stroke-linejoin="round"/></svg>
<div style="left:1352px;top:49px;width:236px;height:721.5px;background:#000;"></div>
<span class="t" style="left:1612.55px;top:197.60px;font-size:17px;color:#f4f4f4;transform:scaleX(1.0185);">Noraslinda Mohamed Ismail</span>
</body></html>
